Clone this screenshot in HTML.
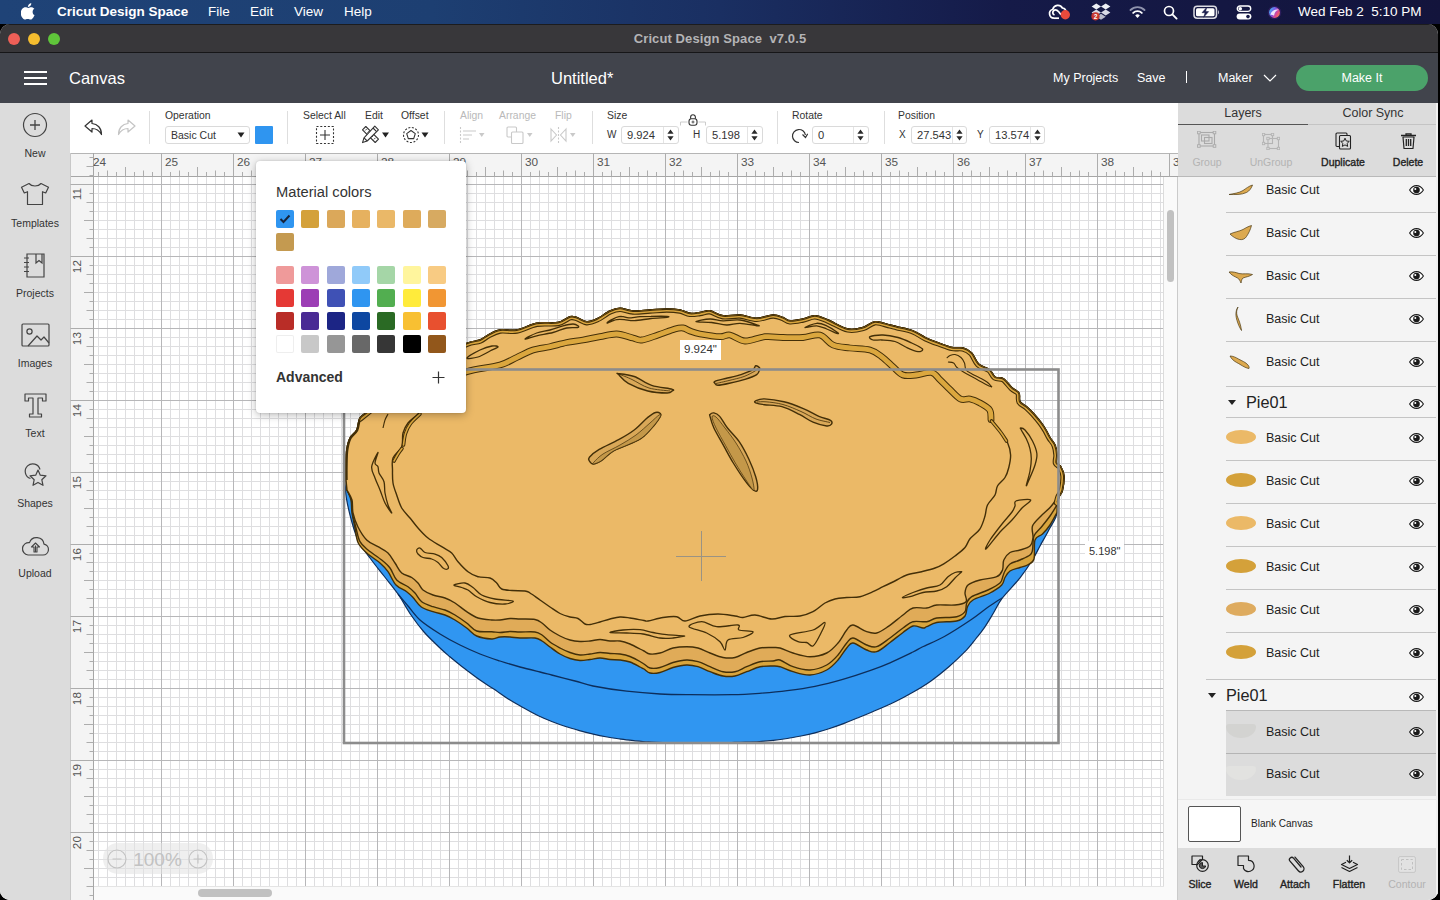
<!DOCTYPE html><html><head><meta charset="utf-8"><title>Cricut Design Space</title><style>
*{box-sizing:border-box;margin:0;padding:0}
html,body{width:1440px;height:900px;overflow:hidden;background:#000}
body{font-family:"Liberation Sans",sans-serif;position:relative;color:#222}
.abs{position:absolute}
.t{position:absolute;white-space:nowrap;line-height:1}
#menubar{left:0;top:0;width:1440px;height:24px;background:linear-gradient(90deg,#1f4377 0%,#1d3f72 30%,#1a2f62 50%,#151a48 70%,#13143c 100%)}
#menubar .t{color:#fff;font-size:13.5px;top:5px}
#win{left:0;top:24px;width:1438px;height:876px;background:#f4f4f4;border-radius:10px 10px 10px 10px;overflow:hidden}
#titlebar{left:0;top:0;width:1440px;height:29px;background:#38373a;border-top:1px solid #1c1c1e;border-bottom:1px solid #161618}
#header{left:0;top:29px;width:1440px;height:50px;background:#41444c}
#header .t{color:#fff}
#sidebar{left:0;top:79px;width:70px;height:797px;background:#dcdcdc}
#sidebar .t{font-size:10.5px;color:#333;width:70px;text-align:center;left:0}
#toolbar{left:70px;top:79px;width:1108px;height:50px;background:#fff}
#toolbar .lbl{font-size:10.4px;color:#333;top:8px}
#toolbar .dis{color:#b9b9b9}
.div{position:absolute;width:1px;top:8px;height:33px;background:#dedede}
.inp{position:absolute;top:23px;height:18px;border:1px solid #dadada;border-radius:3px;background:#fff;font-size:11.2px;color:#333;line-height:16px;padding-left:5px}
.sm{font-size:10px;color:#333;top:27px}
.spin{position:absolute;top:2px;width:7px;height:12px}
#canvas{left:70px;top:129px;width:1108px;height:747px;background:#fafafa;overflow:hidden}
#panel{left:1178px;top:79px;width:262px;height:797px;background:#f4f4f4;box-shadow:inset -3px 0 0 #fdfdfd}
</style></head><body><div id="menubar" class="abs"><svg class="abs" style="left:21px;top:3px" width="15" height="17" viewBox="0 0 15 17"><path d="M10.3 0.2c.1 1-.3 1.9-.9 2.6-.6.7-1.6 1.200-2.500 1.100-.1-1 .4-1.900.9-2.500.6-.7 1.700-1.200 2.500-1.200zM13.600 12.100c-.4.900-.6 1.300-1.100 2.100-.7 1.100-1.700 2.400-2.900 2.400-1.100 0-1.400-.7-2.900-.7s-1.800.7-2.900.7c-1.200 0-2.100-1.200-2.800-2.300C-.9 11.400-.4 7.700 1.100 5.900c.9-1.100 2.100-1.700 3.300-1.700 1.200 0 2 .7 3 .7s1.600-.7 3-.7c1 0 2.200.6 3 1.600-2.600 1.500-2.200 5.200.2 6.300z" fill="#fff"/></svg><span class="t" style="left:57px;font-weight:bold">Cricut Design Space</span><span class="t" style="left:208px">File</span><span class="t" style="left:250px">Edit</span><span class="t" style="left:294px">View</span><span class="t" style="left:344px">Help</span><span class="t" style="left:1298px">Wed Feb 2&nbsp; 5:10 PM</span>
<svg class="abs" style="left:1048px;top:3px" width="24" height="20" viewBox="0 0 24 20"><g fill="none" stroke="#fff" stroke-width="1.700"><path d="M6 15.200a4.600 4.600 0 0 1-1.200-9 5.200 5.200 0 0 1 9.600-1.200 4.300 4.300 0 0 1 3.600 3"/><path d="M6.500 12a2.700 2.700 0 0 1 1-5.200c1.300 0 2.200.8 3.200 2l2.300 2.900"/><path d="M6 15.200h5"/></g><circle cx="17.300" cy="11.800" r="4.700" fill="#ea4a3c"/></svg>
<svg class="abs" style="left:1089px;top:2px" width="24" height="21" viewBox="0 0 24 21"><g fill="#d9dbe6"><path d="M7.300 1.500l4.700 3-4.700 3-4.700-3zM16.700 1.500l4.700 3-4.700 3-4.700-3z" fill="#eef0f6"/><path d="M2.600 10.500l4.700-3 4.700 3-4.700 3zM16.700 7.500l4.700 3-4.700 3-4.700-3z"/><path d="M7.300 14.800l4.700-3 4.700 3-4.700 3z" fill="#b9bccb"/></g><circle cx="6.500" cy="14.300" r="4.100" fill="#c8372d"/><text x="6.500" y="16.700" font-size="6.600" fill="#fff" text-anchor="middle" font-family="Liberation Sans" font-weight="bold">2</text></svg>
<svg class="abs" style="left:1129px;top:5px" width="17" height="14" viewBox="0 0 17 14"><g fill="none" stroke-linecap="round"><path d="M1.500 5a10 10 0 0 1 14 0" stroke="#8f93ad" stroke-width="1.900"/><path d="M4.200 7.900a6.200 6.200 0 0 1 8.600 0" stroke="#fff" stroke-width="1.900"/></g><path d="M8.500 13l-2.300-2.600a3.200 3.200 0 0 1 4.600 0z" fill="#fff"/></svg>
<svg class="abs" style="left:1163px;top:5px" width="15" height="15" viewBox="0 0 15 15"><circle cx="6" cy="6" r="4.500" fill="none" stroke="#fff" stroke-width="1.700"/><path d="M9.400 9.400l4.200 4.200" stroke="#fff" stroke-width="1.900" stroke-linecap="round"/></svg>
<svg class="abs" style="left:1193px;top:5px" width="28" height="15" viewBox="0 0 28 15"><rect x="1" y="1.300" width="22.500" height="12" rx="3.200" fill="none" stroke="#fff" stroke-opacity=".85" stroke-width="1.500"/><rect x="3" y="3.300" width="18.500" height="8" rx="1.500" fill="#fff"/><path d="M25 5.300v4c1.300-.4 1.300-3.600 0-4z" fill="#fff" fill-opacity=".7"/><path d="M13.800 2.200l-4.800 5.500h3l-1.300 4.600 5-5.700h-3.100z" fill="#1a1c4c" stroke="#1a1c4c" stroke-width=".5"/></svg>
<svg class="abs" style="left:1236px;top:5px" width="16" height="15" viewBox="0 0 16 15"><rect x="1.300" y="1" width="13.400" height="5.400" rx="2.700" fill="none" stroke="#fff" stroke-width="1.400"/><circle cx="4.300" cy="3.700" r="1.800" fill="#fff"/><rect x="0.600" y="8.600" width="14.800" height="6" rx="3" fill="#fff"/><circle cx="12" cy="11.600" r="1.800" fill="#171a48"/></svg>
<svg class="abs" style="left:1267px;top:5px" width="15" height="15" viewBox="0 0 16 16"><defs><linearGradient id="siri" x1="0" y1=".2" x2="1" y2=".8"><stop offset="0" stop-color="#3fc4f4"/><stop offset=".4" stop-color="#7a55e8"/><stop offset=".7" stop-color="#e0468f"/><stop offset="1" stop-color="#f58a3c"/></linearGradient></defs><circle cx="8" cy="8" r="7.300" fill="#2b1d5a"/><circle cx="8" cy="8" r="5.800" fill="url(#siri)"/><path d="M3.500 10.500c1.500-4.500 5-6 9-5.500-3 .8-4.500 3-5 6.500-1-.8-2.500-1.200-4-1z" fill="#fff" fill-opacity=".85"/></svg>
</div><div id="win" class="abs"><div id="titlebar" class="abs"><div class="abs" style="left:8px;top:8px;width:12px;height:12px;border-radius:6px;background:#ee5f57"></div><div class="abs" style="left:28px;top:8px;width:12px;height:12px;border-radius:6px;background:#f5bd2f"></div><div class="abs" style="left:48px;top:8px;width:12px;height:12px;border-radius:6px;background:#5fc53a"></div><span class="t" style="left:0;width:1440px;text-align:center;top:7px;font-size:13px;font-weight:bold;color:#b4b4b6;letter-spacing:.1px">Cricut Design Space&nbsp; v7.0.5</span></div><div id="header" class="abs"><div class="abs" style="left:24px;top:18px;width:23px;height:2px;background:#fff"></div><div class="abs" style="left:24px;top:24px;width:23px;height:2px;background:#fff"></div><div class="abs" style="left:24px;top:30px;width:23px;height:2px;background:#fff"></div><span class="t" style="left:69px;top:17px;font-size:16.500px">Canvas</span><span class="t" style="left:551px;top:17px;font-size:16.500px">Untitled*</span><span class="t" style="left:1053px;top:19px;font-size:12.500px">My Projects</span><span class="t" style="left:1137px;top:19px;font-size:12.500px">Save</span><div class="abs" style="left:1186px;top:18px;width:1px;height:12px;background:#fff"></div><span class="t" style="left:1218px;top:19px;font-size:12.500px">Maker</span><svg class="abs" style="left:1263px;top:21px" width="14" height="8" viewBox="0 0 14 8"><path d="M1 1l6 6 6-6" fill="none" stroke="#fff" stroke-width="1.200"/></svg><div class="abs" style="left:1296px;top:12px;width:132px;height:26px;border-radius:13px;background:#4ba26a"></div><span class="t" style="left:1296px;width:132px;text-align:center;top:19px;font-size:12.500px">Make It</span></div></div><div class="abs" style="left:0;top:103px;width:1438px;height:797px;overflow:hidden;border-radius:0 0 10px 10px"><div class="abs" style="left:0;top:-103px;width:1440px;height:900px"><div class="abs" style="left:0;top:103px;width:1440px;height:797px;background:#fafafa"></div><div class="abs" style="left:0;top:24px;width:1440px;height:0"><div class="abs" style="left:0;top:0"></div></div><div id="canvas" class="abs"></div><svg class="abs" style="left:0;top:0" width="1440" height="900" viewBox="0 0 1440 900"><defs><clipPath id="gridclip"><rect x="93" y="177" width="1071" height="709"/></clipPath></defs><rect x="93" y="177" width="1071" height="709" fill="#fff"/><path d="M98.5 177V886M107.5 177V886M116.5 177V886M125.5 177V886M134.5 177V886M143.5 177V886M152.5 177V886M170.5 177V886M179.5 177V886M188.5 177V886M197.5 177V886M206.5 177V886M215.5 177V886M224.5 177V886M242.5 177V886M251.5 177V886M260.5 177V886M269.5 177V886M278.5 177V886M287.5 177V886M296.5 177V886M314.5 177V886M323.5 177V886M332.5 177V886M341.5 177V886M350.5 177V886M359.5 177V886M368.5 177V886M386.5 177V886M395.5 177V886M404.5 177V886M413.5 177V886M422.5 177V886M431.5 177V886M440.5 177V886M458.5 177V886M467.5 177V886M476.5 177V886M485.5 177V886M494.5 177V886M503.5 177V886M512.5 177V886M530.5 177V886M539.5 177V886M548.5 177V886M557.5 177V886M566.5 177V886M575.5 177V886M584.5 177V886M602.5 177V886M611.5 177V886M620.5 177V886M629.5 177V886M638.5 177V886M647.5 177V886M656.5 177V886M674.5 177V886M683.5 177V886M692.5 177V886M701.5 177V886M710.5 177V886M719.5 177V886M728.5 177V886M746.5 177V886M755.5 177V886M764.5 177V886M773.5 177V886M782.5 177V886M791.5 177V886M800.5 177V886M818.5 177V886M827.5 177V886M836.5 177V886M845.5 177V886M854.5 177V886M863.5 177V886M872.5 177V886M890.5 177V886M899.5 177V886M908.5 177V886M917.5 177V886M926.5 177V886M935.5 177V886M944.5 177V886M962.5 177V886M971.5 177V886M980.5 177V886M989.5 177V886M998.5 177V886M1007.5 177V886M1016.5 177V886M1034.5 177V886M1043.5 177V886M1052.5 177V886M1061.5 177V886M1070.5 177V886M1079.5 177V886M1088.5 177V886M1106.5 177V886M1115.5 177V886M1124.5 177V886M1133.5 177V886M1142.5 177V886M1151.5 177V886M1160.5 177V886M93 193.5H1164M93 202.5H1164M93 211.5H1164M93 220.5H1164M93 229.5H1164M93 238.5H1164M93 247.5H1164M93 265.5H1164M93 274.5H1164M93 283.5H1164M93 292.5H1164M93 301.5H1164M93 310.5H1164M93 319.5H1164M93 337.5H1164M93 346.5H1164M93 355.5H1164M93 364.5H1164M93 373.5H1164M93 382.5H1164M93 391.5H1164M93 409.5H1164M93 418.5H1164M93 427.5H1164M93 436.5H1164M93 445.5H1164M93 454.5H1164M93 463.5H1164M93 481.5H1164M93 490.5H1164M93 499.5H1164M93 508.5H1164M93 517.5H1164M93 526.5H1164M93 535.5H1164M93 553.5H1164M93 562.5H1164M93 571.5H1164M93 580.5H1164M93 589.5H1164M93 598.5H1164M93 607.5H1164M93 625.5H1164M93 634.5H1164M93 643.5H1164M93 652.5H1164M93 661.5H1164M93 670.5H1164M93 679.5H1164M93 697.5H1164M93 706.5H1164M93 715.5H1164M93 724.5H1164M93 733.5H1164M93 742.5H1164M93 751.5H1164M93 769.5H1164M93 778.5H1164M93 787.5H1164M93 796.5H1164M93 805.5H1164M93 814.5H1164M93 823.5H1164M93 841.5H1164M93 850.5H1164M93 859.5H1164M93 868.5H1164M93 877.5H1164" stroke="#dedee0" stroke-width="1" fill="none"/><path d="M161.5 177V886M233.5 177V886M305.5 177V886M377.5 177V886M449.5 177V886M521.5 177V886M593.5 177V886M665.5 177V886M737.5 177V886M809.5 177V886M881.5 177V886M953.5 177V886M1025.5 177V886M1097.5 177V886M93 184.5H1164M93 256.5H1164M93 328.5H1164M93 400.5H1164M93 472.5H1164M93 544.5H1164M93 616.5H1164M93 688.5H1164M93 760.5H1164M93 832.5H1164" stroke="#b7b7b9" stroke-width="1" fill="none"/><rect x="70" y="153" width="1108" height="24" fill="#f4f4f4"/><rect x="70" y="153" width="23" height="747" fill="#f4f4f4"/><path d="M70 153.500H1178" stroke="#b5b5b5" stroke-width="1"/><path d="M70 176.500H1178" stroke="#a6a6a6" stroke-width="1"/><path d="M93.500 153V900" stroke="#a6a6a6" stroke-width="1"/><path d="M70.500 153V900" stroke="#c8c8c8" stroke-width="1"/><path d="M98.5 176.500v-4.5M107.5 176.500v-6M116.5 176.500v-4.5M125.5 176.500v-9.5M134.5 176.500v-4.5M143.5 176.500v-6M152.5 176.500v-4.5M161.5 176.500v-23M170.5 176.500v-4.5M179.5 176.500v-6M188.5 176.500v-4.5M197.5 176.500v-9.5M206.5 176.500v-4.5M215.5 176.500v-6M224.5 176.500v-4.5M233.5 176.500v-23M242.5 176.500v-4.5M251.5 176.500v-6M260.5 176.500v-4.5M269.5 176.500v-9.5M278.5 176.500v-4.5M287.5 176.500v-6M296.5 176.500v-4.5M305.5 176.500v-23M314.5 176.500v-4.5M323.5 176.500v-6M332.5 176.500v-4.5M341.5 176.500v-9.5M350.5 176.500v-4.5M359.5 176.500v-6M368.5 176.500v-4.5M377.5 176.500v-23M386.5 176.500v-4.5M395.5 176.500v-6M404.5 176.500v-4.5M413.5 176.500v-9.5M422.5 176.500v-4.5M431.5 176.500v-6M440.5 176.500v-4.5M449.5 176.500v-23M458.5 176.500v-4.5M467.5 176.500v-6M476.5 176.500v-4.5M485.5 176.500v-9.5M494.5 176.500v-4.5M503.5 176.500v-6M512.5 176.500v-4.5M521.5 176.500v-23M530.5 176.500v-4.5M539.5 176.500v-6M548.5 176.500v-4.5M557.5 176.500v-9.5M566.5 176.500v-4.5M575.5 176.500v-6M584.5 176.500v-4.5M593.5 176.500v-23M602.5 176.500v-4.5M611.5 176.500v-6M620.5 176.500v-4.5M629.5 176.500v-9.5M638.5 176.500v-4.5M647.5 176.500v-6M656.5 176.500v-4.5M665.5 176.500v-23M674.5 176.500v-4.5M683.5 176.500v-6M692.5 176.500v-4.5M701.5 176.500v-9.5M710.5 176.500v-4.5M719.5 176.500v-6M728.5 176.500v-4.5M737.5 176.500v-23M746.5 176.500v-4.5M755.5 176.500v-6M764.5 176.500v-4.5M773.5 176.500v-9.5M782.5 176.500v-4.5M791.5 176.500v-6M800.5 176.500v-4.5M809.5 176.500v-23M818.5 176.500v-4.5M827.5 176.500v-6M836.5 176.500v-4.5M845.5 176.500v-9.5M854.5 176.500v-4.5M863.5 176.500v-6M872.5 176.500v-4.5M881.5 176.500v-23M890.5 176.500v-4.5M899.5 176.500v-6M908.5 176.500v-4.5M917.5 176.500v-9.5M926.5 176.500v-4.5M935.5 176.500v-6M944.5 176.500v-4.5M953.5 176.500v-23M962.5 176.500v-4.5M971.5 176.500v-6M980.5 176.500v-4.5M989.5 176.500v-9.5M998.5 176.500v-4.5M1007.5 176.500v-6M1016.5 176.500v-4.5M1025.5 176.500v-23M1034.5 176.500v-4.5M1043.5 176.500v-6M1052.5 176.500v-4.5M1061.5 176.500v-9.5M1070.5 176.500v-4.5M1079.5 176.500v-6M1088.5 176.500v-4.5M1097.5 176.500v-23M1106.5 176.500v-4.5M1115.5 176.500v-6M1124.5 176.500v-4.5M1133.5 176.500v-9.5M1142.5 176.500v-4.5M1151.5 176.500v-6M1160.5 176.500v-4.5M1169.5 176.500v-23M93.500 157.5h-4M93.500 166.5h-7M93.500 175.5h-4M93.500 184.5h-23M93.500 193.5h-4M93.500 202.5h-7M93.500 211.5h-4M93.500 220.5h-9.5M93.500 229.5h-4M93.500 238.5h-7M93.500 247.5h-4M93.500 256.5h-23M93.500 265.5h-4M93.500 274.5h-7M93.500 283.5h-4M93.500 292.5h-9.5M93.500 301.5h-4M93.500 310.5h-7M93.500 319.5h-4M93.500 328.5h-23M93.500 337.5h-4M93.500 346.5h-7M93.500 355.5h-4M93.500 364.5h-9.5M93.500 373.5h-4M93.500 382.5h-7M93.500 391.5h-4M93.500 400.5h-23M93.500 409.5h-4M93.500 418.5h-7M93.500 427.5h-4M93.500 436.5h-9.5M93.500 445.5h-4M93.500 454.5h-7M93.500 463.5h-4M93.500 472.5h-23M93.500 481.5h-4M93.500 490.5h-7M93.500 499.5h-4M93.500 508.5h-9.5M93.500 517.5h-4M93.500 526.5h-7M93.500 535.5h-4M93.500 544.5h-23M93.500 553.5h-4M93.500 562.5h-7M93.500 571.5h-4M93.500 580.5h-9.5M93.500 589.5h-4M93.500 598.5h-7M93.500 607.5h-4M93.500 616.5h-23M93.500 625.5h-4M93.500 634.5h-7M93.500 643.5h-4M93.500 652.5h-9.5M93.500 661.5h-4M93.500 670.5h-7M93.500 679.5h-4M93.500 688.5h-23M93.500 697.5h-4M93.500 706.5h-7M93.500 715.5h-4M93.500 724.5h-9.5M93.500 733.5h-4M93.500 742.5h-7M93.500 751.5h-4M93.500 760.5h-23M93.500 769.5h-4M93.500 778.5h-7M93.500 787.5h-4M93.500 796.5h-9.5M93.500 805.5h-4M93.500 814.5h-7M93.500 823.5h-4M93.500 832.5h-23M93.500 841.5h-4M93.500 850.5h-7M93.500 859.5h-4M93.500 868.5h-9.5M93.500 877.5h-4M93.500 886.5h-7M93.500 895.5h-4" stroke="#adadad" stroke-width="1" fill="none"/><text x="93" y="166" font-size="11.800" fill="#555" font-family="Liberation Sans">24</text><text x="165" y="166" font-size="11.800" fill="#555" font-family="Liberation Sans">25</text><text x="237" y="166" font-size="11.800" fill="#555" font-family="Liberation Sans">26</text><text x="309" y="166" font-size="11.800" fill="#555" font-family="Liberation Sans">27</text><text x="381" y="166" font-size="11.800" fill="#555" font-family="Liberation Sans">28</text><text x="453" y="166" font-size="11.800" fill="#555" font-family="Liberation Sans">29</text><text x="525" y="166" font-size="11.800" fill="#555" font-family="Liberation Sans">30</text><text x="597" y="166" font-size="11.800" fill="#555" font-family="Liberation Sans">31</text><text x="669" y="166" font-size="11.800" fill="#555" font-family="Liberation Sans">32</text><text x="741" y="166" font-size="11.800" fill="#555" font-family="Liberation Sans">33</text><text x="813" y="166" font-size="11.800" fill="#555" font-family="Liberation Sans">34</text><text x="885" y="166" font-size="11.800" fill="#555" font-family="Liberation Sans">35</text><text x="957" y="166" font-size="11.800" fill="#555" font-family="Liberation Sans">36</text><text x="1029" y="166" font-size="11.800" fill="#555" font-family="Liberation Sans">37</text><text x="1101" y="166" font-size="11.800" fill="#555" font-family="Liberation Sans">38</text><text x="1173" y="166" font-size="11.800" fill="#555" font-family="Liberation Sans">39</text><text transform="translate(81,188) rotate(-90)" font-size="11.800" fill="#555" font-family="Liberation Sans" text-anchor="end">11</text><text transform="translate(81,260) rotate(-90)" font-size="11.800" fill="#555" font-family="Liberation Sans" text-anchor="end">12</text><text transform="translate(81,332) rotate(-90)" font-size="11.800" fill="#555" font-family="Liberation Sans" text-anchor="end">13</text><text transform="translate(81,404) rotate(-90)" font-size="11.800" fill="#555" font-family="Liberation Sans" text-anchor="end">14</text><text transform="translate(81,476) rotate(-90)" font-size="11.800" fill="#555" font-family="Liberation Sans" text-anchor="end">15</text><text transform="translate(81,548) rotate(-90)" font-size="11.800" fill="#555" font-family="Liberation Sans" text-anchor="end">16</text><text transform="translate(81,620) rotate(-90)" font-size="11.800" fill="#555" font-family="Liberation Sans" text-anchor="end">17</text><text transform="translate(81,692) rotate(-90)" font-size="11.800" fill="#555" font-family="Liberation Sans" text-anchor="end">18</text><text transform="translate(81,764) rotate(-90)" font-size="11.800" fill="#555" font-family="Liberation Sans" text-anchor="end">19</text><text transform="translate(81,836) rotate(-90)" font-size="11.800" fill="#555" font-family="Liberation Sans" text-anchor="end">20</text><rect x="1164" y="177" width="14" height="723" fill="#fafafa"/><path d="M1163.500 177V900" stroke="#dcdcdc"/><rect x="94" y="886" width="1070" height="14" fill="#fafafa"/><path d="M94 886.500H1164" stroke="#e4e4e4"/><rect x="1167" y="210" width="7" height="72" rx="3.500" fill="#c1c1c1"/><rect x="198" y="889" width="74" height="8" rx="4" fill="#c1c1c1"/><g clip-path="url(#gridclip)"><path d="M360.0 470.0C358.2 471.3 351.4 474.7 349.0 478.0C346.6 481.3 345.3 483.8 345.5 490.0C345.7 496.2 347.9 506.7 350.0 515.0C352.1 523.3 354.7 532.8 358.0 540.0C361.3 547.2 365.7 552.0 370.0 558.0C374.3 564.0 379.3 570.0 384.0 576.0C388.7 582.0 393.5 587.5 398.0 594.0C402.5 600.5 406.7 608.7 411.0 615.0C415.3 621.3 419.2 626.5 424.0 632.0C428.8 637.5 435.8 643.9 440.0 648.0C444.2 652.1 446.2 653.7 449.5 656.5C452.8 659.3 454.9 661.1 460.0 665.0C465.1 668.9 474.5 676.1 480.0 680.0C485.5 683.9 488.0 685.2 493.0 688.5C498.0 691.8 504.9 696.8 510.0 700.0C515.1 703.2 519.3 705.4 523.9 708.0C528.5 710.6 533.2 713.2 537.8 715.5C542.4 717.8 547.1 719.7 551.7 721.5C556.3 723.3 561.0 725.0 565.6 726.5C570.2 728.0 574.8 729.3 579.4 730.6C584.0 731.9 588.7 733.1 593.3 734.2C597.9 735.3 602.6 736.2 607.2 737.0C611.8 737.8 616.5 738.6 621.1 739.2C625.7 739.8 630.4 740.3 635.0 740.8C639.6 741.2 644.3 741.6 648.9 741.9C653.5 742.2 654.3 742.4 662.8 742.5C671.3 742.6 688.5 742.7 700.0 742.7C711.5 742.7 724.1 742.6 731.7 742.5C739.3 742.4 741.0 742.4 745.6 742.2C750.2 742.0 754.8 741.8 759.4 741.5C764.0 741.2 768.7 740.8 773.3 740.3C777.9 739.8 782.6 739.2 787.2 738.5C791.8 737.8 796.4 736.9 801.0 736.0C805.6 735.1 810.4 734.1 815.0 732.9C819.6 731.7 824.3 730.3 828.9 728.8C833.5 727.3 838.2 725.6 842.8 723.9C847.4 722.1 850.9 720.7 856.7 718.3C862.5 715.9 871.3 712.3 877.8 709.5C884.3 706.7 889.7 704.4 895.6 701.5C901.5 698.6 907.4 695.4 913.3 692.0C919.2 688.6 925.1 685.1 931.0 680.9C936.9 676.7 942.9 671.9 948.9 666.7C954.9 661.5 962.2 654.4 966.7 649.8C971.2 645.2 972.7 642.7 975.6 639.0C978.5 635.3 981.5 631.9 984.4 627.6C987.3 623.3 990.3 618.2 993.3 613.3C996.3 608.4 997.8 604.1 1002.2 598.2C1006.7 592.3 1015.0 584.2 1020.0 577.8C1025.0 571.4 1029.1 565.3 1032.4 560.0C1035.7 554.7 1037.3 551.0 1040.0 546.0C1042.7 541.0 1046.0 535.6 1048.8 530.0C1051.6 524.4 1056.5 519.2 1057.0 512.5C1057.5 505.8 1054.8 497.1 1052.0 490.0C1049.2 482.9 1042.0 473.3 1040.0 470.0Z" fill="#3096f1" stroke="#0d2e5c" stroke-width="1.2"/>
<path d="M398.0 594.0C399.7 596.0 404.3 601.7 408.0 606.0C411.7 610.3 414.7 615.3 420.0 620.0C425.3 624.7 433.3 629.8 440.0 634.0C446.7 638.2 453.3 641.7 460.0 645.0C466.7 648.3 473.3 651.3 480.0 654.0C486.7 656.7 493.3 658.8 500.0 661.0C506.7 663.2 513.3 665.2 520.0 667.0C526.7 668.8 534.7 670.7 540.0 672.0C545.3 673.3 545.9 673.5 551.7 675.0C557.5 676.5 568.1 679.2 575.0 681.0C581.9 682.8 584.4 684.3 593.0 686.0C601.6 687.7 615.5 689.9 626.7 691.2C637.9 692.5 649.5 693.4 660.0 694.0C670.5 694.6 678.0 694.6 690.0 694.7C702.0 694.8 720.1 694.9 731.7 694.7C743.3 694.5 750.1 694.0 759.4 693.3C768.6 692.6 777.9 691.8 787.2 690.6C796.5 689.5 805.7 688.3 815.0 686.4C824.3 684.5 833.5 682.1 842.8 679.4C852.1 676.7 862.7 673.2 870.6 670.4C878.5 667.6 882.9 665.9 890.0 662.8C897.1 659.7 907.6 654.6 913.0 652.0C918.4 649.4 917.0 649.6 922.2 647.0C927.4 644.4 936.3 641.0 944.4 636.5C952.5 632.0 963.6 624.8 971.0 619.8C978.4 614.8 983.7 610.1 988.9 606.5C994.1 602.9 999.8 599.4 1002.0 598.0" fill="none" stroke="#0d2e5c" stroke-width="1.3"/>
<clipPath id="cS3"><path d="M346.0 480.0C346.0 477.7 345.9 471.0 346.0 466.0C346.1 461.0 346.0 454.7 346.7 450.0C347.4 445.3 348.3 441.3 350.0 438.0C351.7 434.7 355.0 433.3 356.7 430.0C358.4 426.7 357.8 421.3 360.0 418.0C362.2 414.7 366.0 413.3 370.0 410.0C374.0 406.7 379.0 402.2 384.0 398.0C389.0 393.8 394.0 389.7 400.0 385.0C406.0 380.3 412.5 375.0 420.0 370.0C427.5 365.0 437.2 359.4 445.0 355.0C452.8 350.6 460.9 345.8 466.7 343.3C472.5 340.8 476.4 341.4 480.0 340.0C483.6 338.6 484.7 336.7 488.0 335.0C491.3 333.3 495.2 330.8 500.0 330.0C504.8 329.2 510.6 331.1 516.7 330.0C522.8 328.9 529.8 324.6 536.7 323.3C543.6 322.1 552.5 323.6 558.0 322.5C563.5 321.4 566.9 317.5 570.0 316.7C573.1 315.9 573.9 316.7 576.7 317.5C579.5 318.3 583.4 321.4 586.7 321.7C590.0 321.9 592.8 320.8 596.7 319.0C600.6 317.2 606.1 312.8 610.0 311.0C613.9 309.2 616.2 308.3 620.0 308.3C623.8 308.3 628.0 310.7 633.0 311.0C638.0 311.3 644.4 310.3 650.0 310.0C655.6 309.7 661.7 309.0 666.7 309.0C671.7 309.0 676.1 309.3 680.0 310.0C683.9 310.7 686.7 312.9 690.0 313.3C693.3 313.7 696.7 312.9 700.0 312.5C703.3 312.1 706.2 310.2 710.0 310.8C713.8 311.4 718.0 315.1 723.0 315.8C728.0 316.5 734.4 314.6 740.0 315.0C745.6 315.4 751.2 318.3 756.7 318.3C762.2 318.3 768.6 315.1 773.0 315.0C777.4 314.9 780.2 316.5 783.0 317.5C785.8 318.5 786.7 320.6 790.0 320.8C793.3 321.1 798.8 319.8 803.0 319.0C807.2 318.2 810.8 315.6 815.0 315.8C819.2 316.0 822.5 317.8 828.0 320.0C833.5 322.2 842.2 327.8 848.0 329.0C853.8 330.2 858.5 328.7 863.0 327.5C867.5 326.3 870.5 322.1 875.0 321.7C879.5 321.3 886.4 324.2 890.0 325.0C893.6 325.8 892.9 325.7 896.7 326.7C900.5 327.7 908.1 328.9 913.0 330.8C917.9 332.7 921.3 335.7 925.8 337.8C930.2 339.9 935.3 341.7 939.7 343.3C944.1 344.9 948.1 346.7 952.0 347.5C955.9 348.3 959.7 347.1 963.0 348.0C966.3 348.9 969.1 350.3 971.7 353.0C974.3 355.7 975.6 361.2 978.6 364.0C981.6 366.8 987.0 367.5 989.7 369.7C992.4 371.9 992.7 375.5 995.0 377.0C997.3 378.5 1000.8 377.0 1003.6 378.8C1006.4 380.6 1009.4 385.4 1012.0 387.8C1014.6 390.2 1017.7 390.7 1019.0 393.0C1020.3 395.3 1018.7 399.4 1020.0 401.7C1021.3 404.0 1024.7 404.9 1027.0 407.0C1029.3 409.1 1031.7 411.4 1034.0 414.0C1036.3 416.6 1039.0 419.8 1041.0 422.5C1043.0 425.2 1044.5 427.5 1046.0 430.0C1047.5 432.5 1048.5 435.0 1050.0 437.5C1051.5 440.0 1053.8 442.1 1055.0 445.0C1056.2 447.9 1056.8 452.0 1057.0 455.0C1057.2 458.0 1055.8 461.0 1056.5 463.0C1057.2 465.0 1059.8 464.8 1061.0 467.0C1062.2 469.2 1063.8 472.2 1064.0 476.0C1064.2 479.8 1063.3 486.5 1062.5 490.0C1061.7 493.5 1059.8 494.9 1059.0 497.0C1058.2 499.1 1057.8 501.6 1057.5 502.5L1057.0 512.5C1055.8 514.6 1052.4 521.4 1050.0 525.0C1047.6 528.6 1045.0 531.5 1042.5 534.0C1040.0 536.5 1036.4 535.8 1035.0 540.0C1033.6 544.2 1035.2 554.8 1034.0 559.0C1032.8 563.2 1029.8 563.6 1027.5 565.0C1025.2 566.4 1022.9 566.5 1020.0 567.5C1017.1 568.5 1012.5 569.3 1010.0 571.0C1007.5 572.7 1006.4 575.2 1005.0 577.5C1003.6 579.8 1004.2 582.4 1001.7 585.0C999.2 587.6 994.8 590.5 990.0 593.0C985.2 595.5 976.8 597.7 973.0 600.0C969.2 602.3 968.8 604.0 967.5 606.7C966.2 609.4 966.8 613.6 965.0 616.0C963.2 618.4 961.4 619.9 956.7 621.0C952.0 622.1 941.7 621.5 936.7 622.5C931.7 623.5 929.0 625.8 926.7 626.7C924.4 627.6 925.3 628.1 923.0 628.0C920.7 627.9 916.3 625.2 913.0 626.0C909.7 626.8 906.8 629.8 903.0 632.5C899.2 635.2 894.4 639.3 890.0 642.5C885.6 645.7 880.6 650.5 876.7 651.7C872.8 653.0 870.7 651.5 866.7 650.0C862.8 648.5 856.3 643.3 853.0 643.0C849.7 642.7 849.2 645.2 846.7 648.0C844.2 650.8 841.3 656.3 838.0 660.0C834.7 663.7 831.4 667.5 826.7 670.0C822.0 672.5 815.6 674.7 810.0 675.0C804.4 675.3 798.0 673.1 793.0 671.7C788.0 670.3 783.3 667.7 780.0 666.7C776.7 665.8 776.3 666.0 773.0 666.0C769.7 666.0 764.4 665.8 760.0 666.7C755.6 667.7 750.9 670.2 746.7 671.7C742.5 673.2 739.0 675.3 735.0 676.0C731.0 676.7 727.2 676.7 723.0 676.0C718.8 675.3 714.2 673.2 710.0 671.7C705.8 670.2 701.9 667.8 698.0 666.7C694.1 665.6 690.9 664.9 686.7 665.0C682.5 665.1 677.5 666.2 673.0 667.5C668.5 668.8 663.8 671.6 660.0 672.5C656.2 673.4 652.7 673.6 650.0 673.0C647.3 672.4 645.7 670.0 644.0 669.0C642.3 668.0 642.3 668.2 640.0 667.0C637.7 665.8 633.3 663.2 630.0 662.0C626.7 660.8 623.3 660.4 620.0 660.0C616.7 659.6 613.3 659.8 610.0 659.5C606.7 659.2 603.3 658.0 600.0 658.0C596.7 658.0 593.3 659.1 590.0 659.5C586.7 659.9 583.3 660.7 580.0 660.5C576.7 660.3 573.3 659.6 570.0 658.5C566.7 657.4 563.3 655.9 560.0 654.0C556.7 652.1 553.0 649.2 550.0 647.0C547.0 644.8 544.5 642.5 542.0 641.0C539.5 639.5 538.7 638.5 535.0 638.0C531.3 637.5 524.2 638.2 520.0 638.0C515.8 637.8 513.3 637.2 510.0 637.0C506.7 636.8 503.1 636.7 500.0 637.0C496.9 637.3 495.6 639.2 491.7 639.0C487.8 638.8 480.9 637.8 476.7 636.0C472.5 634.2 470.3 630.7 466.7 628.0C463.1 625.3 458.6 622.2 455.0 620.0C451.4 617.8 448.7 616.4 445.0 615.0C441.3 613.6 437.0 613.1 433.0 611.7C429.0 610.3 424.3 609.1 421.0 606.7C417.7 604.3 415.4 600.0 413.0 597.5C410.6 595.0 409.5 593.8 406.7 591.7C403.9 589.6 399.1 588.3 396.0 585.0C392.9 581.7 390.7 575.4 388.0 571.7C385.3 568.0 383.6 566.1 380.0 563.0C376.4 559.9 370.4 556.4 366.7 553.0C363.0 549.6 359.9 546.7 358.0 542.5C356.1 538.3 356.0 532.9 355.0 528.0C354.0 523.1 352.7 517.7 352.0 513.0C351.3 508.3 351.8 503.8 351.0 500.0C350.2 496.2 347.7 491.7 347.0 490.0Z"/></clipPath>
<path d="M346.0 480.0C346.0 477.7 345.9 471.0 346.0 466.0C346.1 461.0 346.0 454.7 346.7 450.0C347.4 445.3 348.3 441.3 350.0 438.0C351.7 434.7 355.0 433.3 356.7 430.0C358.4 426.7 357.8 421.3 360.0 418.0C362.2 414.7 366.0 413.3 370.0 410.0C374.0 406.7 379.0 402.2 384.0 398.0C389.0 393.8 394.0 389.7 400.0 385.0C406.0 380.3 412.5 375.0 420.0 370.0C427.5 365.0 437.2 359.4 445.0 355.0C452.8 350.6 460.9 345.8 466.7 343.3C472.5 340.8 476.4 341.4 480.0 340.0C483.6 338.6 484.7 336.7 488.0 335.0C491.3 333.3 495.2 330.8 500.0 330.0C504.8 329.2 510.6 331.1 516.7 330.0C522.8 328.9 529.8 324.6 536.7 323.3C543.6 322.1 552.5 323.6 558.0 322.5C563.5 321.4 566.9 317.5 570.0 316.7C573.1 315.9 573.9 316.7 576.7 317.5C579.5 318.3 583.4 321.4 586.7 321.7C590.0 321.9 592.8 320.8 596.7 319.0C600.6 317.2 606.1 312.8 610.0 311.0C613.9 309.2 616.2 308.3 620.0 308.3C623.8 308.3 628.0 310.7 633.0 311.0C638.0 311.3 644.4 310.3 650.0 310.0C655.6 309.7 661.7 309.0 666.7 309.0C671.7 309.0 676.1 309.3 680.0 310.0C683.9 310.7 686.7 312.9 690.0 313.3C693.3 313.7 696.7 312.9 700.0 312.5C703.3 312.1 706.2 310.2 710.0 310.8C713.8 311.4 718.0 315.1 723.0 315.8C728.0 316.5 734.4 314.6 740.0 315.0C745.6 315.4 751.2 318.3 756.7 318.3C762.2 318.3 768.6 315.1 773.0 315.0C777.4 314.9 780.2 316.5 783.0 317.5C785.8 318.5 786.7 320.6 790.0 320.8C793.3 321.1 798.8 319.8 803.0 319.0C807.2 318.2 810.8 315.6 815.0 315.8C819.2 316.0 822.5 317.8 828.0 320.0C833.5 322.2 842.2 327.8 848.0 329.0C853.8 330.2 858.5 328.7 863.0 327.5C867.5 326.3 870.5 322.1 875.0 321.7C879.5 321.3 886.4 324.2 890.0 325.0C893.6 325.8 892.9 325.7 896.7 326.7C900.5 327.7 908.1 328.9 913.0 330.8C917.9 332.7 921.3 335.7 925.8 337.8C930.2 339.9 935.3 341.7 939.7 343.3C944.1 344.9 948.1 346.7 952.0 347.5C955.9 348.3 959.7 347.1 963.0 348.0C966.3 348.9 969.1 350.3 971.7 353.0C974.3 355.7 975.6 361.2 978.6 364.0C981.6 366.8 987.0 367.5 989.7 369.7C992.4 371.9 992.7 375.5 995.0 377.0C997.3 378.5 1000.8 377.0 1003.6 378.8C1006.4 380.6 1009.4 385.4 1012.0 387.8C1014.6 390.2 1017.7 390.7 1019.0 393.0C1020.3 395.3 1018.7 399.4 1020.0 401.7C1021.3 404.0 1024.7 404.9 1027.0 407.0C1029.3 409.1 1031.7 411.4 1034.0 414.0C1036.3 416.6 1039.0 419.8 1041.0 422.5C1043.0 425.2 1044.5 427.5 1046.0 430.0C1047.5 432.5 1048.5 435.0 1050.0 437.5C1051.5 440.0 1053.8 442.1 1055.0 445.0C1056.2 447.9 1056.8 452.0 1057.0 455.0C1057.2 458.0 1055.8 461.0 1056.5 463.0C1057.2 465.0 1059.8 464.8 1061.0 467.0C1062.2 469.2 1063.8 472.2 1064.0 476.0C1064.2 479.8 1063.3 486.5 1062.5 490.0C1061.7 493.5 1059.8 494.9 1059.0 497.0C1058.2 499.1 1057.8 501.6 1057.5 502.5L1057.0 512.5C1055.8 514.6 1052.4 521.4 1050.0 525.0C1047.6 528.6 1045.0 531.5 1042.5 534.0C1040.0 536.5 1036.4 535.8 1035.0 540.0C1033.6 544.2 1035.2 554.8 1034.0 559.0C1032.8 563.2 1029.8 563.6 1027.5 565.0C1025.2 566.4 1022.9 566.5 1020.0 567.5C1017.1 568.5 1012.5 569.3 1010.0 571.0C1007.5 572.7 1006.4 575.2 1005.0 577.5C1003.6 579.8 1004.2 582.4 1001.7 585.0C999.2 587.6 994.8 590.5 990.0 593.0C985.2 595.5 976.8 597.7 973.0 600.0C969.2 602.3 968.8 604.0 967.5 606.7C966.2 609.4 966.8 613.6 965.0 616.0C963.2 618.4 961.4 619.9 956.7 621.0C952.0 622.1 941.7 621.5 936.7 622.5C931.7 623.5 929.0 625.8 926.7 626.7C924.4 627.6 925.3 628.1 923.0 628.0C920.7 627.9 916.3 625.2 913.0 626.0C909.7 626.8 906.8 629.8 903.0 632.5C899.2 635.2 894.4 639.3 890.0 642.5C885.6 645.7 880.6 650.5 876.7 651.7C872.8 653.0 870.7 651.5 866.7 650.0C862.8 648.5 856.3 643.3 853.0 643.0C849.7 642.7 849.2 645.2 846.7 648.0C844.2 650.8 841.3 656.3 838.0 660.0C834.7 663.7 831.4 667.5 826.7 670.0C822.0 672.5 815.6 674.7 810.0 675.0C804.4 675.3 798.0 673.1 793.0 671.7C788.0 670.3 783.3 667.7 780.0 666.7C776.7 665.8 776.3 666.0 773.0 666.0C769.7 666.0 764.4 665.8 760.0 666.7C755.6 667.7 750.9 670.2 746.7 671.7C742.5 673.2 739.0 675.3 735.0 676.0C731.0 676.7 727.2 676.7 723.0 676.0C718.8 675.3 714.2 673.2 710.0 671.7C705.8 670.2 701.9 667.8 698.0 666.7C694.1 665.6 690.9 664.9 686.7 665.0C682.5 665.1 677.5 666.2 673.0 667.5C668.5 668.8 663.8 671.6 660.0 672.5C656.2 673.4 652.7 673.6 650.0 673.0C647.3 672.4 645.7 670.0 644.0 669.0C642.3 668.0 642.3 668.2 640.0 667.0C637.7 665.8 633.3 663.2 630.0 662.0C626.7 660.8 623.3 660.4 620.0 660.0C616.7 659.6 613.3 659.8 610.0 659.5C606.7 659.2 603.3 658.0 600.0 658.0C596.7 658.0 593.3 659.1 590.0 659.5C586.7 659.9 583.3 660.7 580.0 660.5C576.7 660.3 573.3 659.6 570.0 658.5C566.7 657.4 563.3 655.9 560.0 654.0C556.7 652.1 553.0 649.2 550.0 647.0C547.0 644.8 544.5 642.5 542.0 641.0C539.5 639.5 538.7 638.5 535.0 638.0C531.3 637.5 524.2 638.2 520.0 638.0C515.8 637.8 513.3 637.2 510.0 637.0C506.7 636.8 503.1 636.7 500.0 637.0C496.9 637.3 495.6 639.2 491.7 639.0C487.8 638.8 480.9 637.8 476.7 636.0C472.5 634.2 470.3 630.7 466.7 628.0C463.1 625.3 458.6 622.2 455.0 620.0C451.4 617.8 448.7 616.4 445.0 615.0C441.3 613.6 437.0 613.1 433.0 611.7C429.0 610.3 424.3 609.1 421.0 606.7C417.7 604.3 415.4 600.0 413.0 597.5C410.6 595.0 409.5 593.8 406.7 591.7C403.9 589.6 399.1 588.3 396.0 585.0C392.9 581.7 390.7 575.4 388.0 571.7C385.3 568.0 383.6 566.1 380.0 563.0C376.4 559.9 370.4 556.4 366.7 553.0C363.0 549.6 359.9 546.7 358.0 542.5C356.1 538.3 356.0 532.9 355.0 528.0C354.0 523.1 352.7 517.7 352.0 513.0C351.3 508.3 351.8 503.8 351.0 500.0C350.2 496.2 347.7 491.7 347.0 490.0Z" fill="#d9a53d" stroke="#432f08" stroke-width="1.4" stroke-linejoin="round"/>
<path d="M346.0 480.0C346.0 477.7 345.9 471.0 346.0 466.0C346.1 461.0 346.0 454.7 346.7 450.0C347.4 445.3 348.3 441.3 350.0 438.0C351.7 434.7 355.0 433.3 356.7 430.0C358.4 426.7 357.8 421.3 360.0 418.0C362.2 414.7 366.0 413.3 370.0 410.0C374.0 406.7 379.0 402.2 384.0 398.0C389.0 393.8 394.0 389.7 400.0 385.0C406.0 380.3 412.5 375.0 420.0 370.0C427.5 365.0 437.2 359.4 445.0 355.0C452.8 350.6 460.9 345.8 466.7 343.3C472.5 340.8 476.4 341.4 480.0 340.0C483.6 338.6 484.7 336.7 488.0 335.0C491.3 333.3 495.2 330.8 500.0 330.0C504.8 329.2 510.6 331.1 516.7 330.0C522.8 328.9 529.8 324.6 536.7 323.3C543.6 322.1 552.5 323.6 558.0 322.5C563.5 321.4 566.9 317.5 570.0 316.7C573.1 315.9 573.9 316.7 576.7 317.5C579.5 318.3 583.4 321.4 586.7 321.7C590.0 321.9 592.8 320.8 596.7 319.0C600.6 317.2 606.1 312.8 610.0 311.0C613.9 309.2 616.2 308.3 620.0 308.3C623.8 308.3 628.0 310.7 633.0 311.0C638.0 311.3 644.4 310.3 650.0 310.0C655.6 309.7 661.7 309.0 666.7 309.0C671.7 309.0 676.1 309.3 680.0 310.0C683.9 310.7 686.7 312.9 690.0 313.3C693.3 313.7 696.7 312.9 700.0 312.5C703.3 312.1 706.2 310.2 710.0 310.8C713.8 311.4 718.0 315.1 723.0 315.8C728.0 316.5 734.4 314.6 740.0 315.0C745.6 315.4 751.2 318.3 756.7 318.3C762.2 318.3 768.6 315.1 773.0 315.0C777.4 314.9 780.2 316.5 783.0 317.5C785.8 318.5 786.7 320.6 790.0 320.8C793.3 321.1 798.8 319.8 803.0 319.0C807.2 318.2 810.8 315.6 815.0 315.8C819.2 316.0 822.5 317.8 828.0 320.0C833.5 322.2 842.2 327.8 848.0 329.0C853.8 330.2 858.5 328.7 863.0 327.5C867.5 326.3 870.5 322.1 875.0 321.7C879.5 321.3 886.4 324.2 890.0 325.0C893.6 325.8 892.9 325.7 896.7 326.7C900.5 327.7 908.1 328.9 913.0 330.8C917.9 332.7 921.3 335.7 925.8 337.8C930.2 339.9 935.3 341.7 939.7 343.3C944.1 344.9 948.1 346.7 952.0 347.5C955.9 348.3 959.7 347.1 963.0 348.0C966.3 348.9 969.1 350.3 971.7 353.0C974.3 355.7 975.6 361.2 978.6 364.0C981.6 366.8 987.0 367.5 989.7 369.7C992.4 371.9 992.7 375.5 995.0 377.0C997.3 378.5 1000.8 377.0 1003.6 378.8C1006.4 380.6 1009.4 385.4 1012.0 387.8C1014.6 390.2 1017.7 390.7 1019.0 393.0C1020.3 395.3 1018.7 399.4 1020.0 401.7C1021.3 404.0 1024.7 404.9 1027.0 407.0C1029.3 409.1 1031.7 411.4 1034.0 414.0C1036.3 416.6 1039.0 419.8 1041.0 422.5C1043.0 425.2 1044.5 427.5 1046.0 430.0C1047.5 432.5 1048.5 435.0 1050.0 437.5C1051.5 440.0 1053.8 442.1 1055.0 445.0C1056.2 447.9 1056.8 452.0 1057.0 455.0C1057.2 458.0 1055.8 461.0 1056.5 463.0C1057.2 465.0 1059.8 464.8 1061.0 467.0C1062.2 469.2 1063.8 472.2 1064.0 476.0C1064.2 479.8 1063.3 486.5 1062.5 490.0C1061.7 493.5 1059.8 494.9 1059.0 497.0C1058.2 499.1 1057.8 501.6 1057.5 502.5L1057.0 505.0C1055.8 506.8 1052.7 512.2 1050.0 516.0C1047.3 519.8 1043.7 524.2 1041.0 527.5C1038.3 530.8 1035.4 532.2 1034.0 536.0C1032.6 539.8 1033.2 546.8 1032.5 550.0C1031.8 553.2 1032.1 553.3 1030.0 555.0C1027.9 556.7 1023.3 558.5 1020.0 560.0C1016.7 561.5 1012.5 562.2 1010.0 564.0C1007.5 565.8 1006.2 569.0 1005.0 571.0C1003.8 573.0 1003.8 574.0 1003.0 576.0C1002.2 578.0 1002.5 580.7 1000.0 583.0C997.5 585.3 992.7 587.7 988.0 590.0C983.3 592.3 975.2 594.5 971.7 596.7C968.2 598.9 967.8 600.5 966.7 603.0C965.6 605.5 966.7 609.4 965.0 611.7C963.3 614.0 961.4 615.7 956.7 616.7C952.0 617.8 941.7 617.2 936.7 618.0C931.7 618.8 930.7 621.1 926.7 621.7C922.8 622.3 917.0 620.7 913.0 621.7C909.0 622.8 906.8 625.3 903.0 628.0C899.2 630.7 894.4 634.9 890.0 638.0C885.6 641.1 880.6 645.5 876.7 646.7C872.8 647.9 870.7 646.5 866.7 645.0C862.8 643.5 856.3 638.3 853.0 638.0C849.7 637.7 849.2 640.2 846.7 643.0C844.2 645.8 841.3 651.3 838.0 655.0C834.7 658.7 831.4 662.5 826.7 665.0C822.0 667.5 815.6 669.7 810.0 670.0C804.4 670.3 798.0 668.4 793.0 666.7C788.0 665.0 783.3 661.0 780.0 660.0C776.7 659.0 776.3 660.7 773.0 661.0C769.7 661.3 764.4 660.8 760.0 661.7C755.6 662.7 750.9 665.0 746.7 666.7C742.5 668.4 739.0 670.9 735.0 671.7C731.0 672.5 727.2 672.5 723.0 671.7C718.8 670.9 714.2 668.4 710.0 666.7C705.8 665.0 701.9 662.8 698.0 661.7C694.1 660.6 690.9 659.9 686.7 660.0C682.5 660.1 677.5 661.2 673.0 662.5C668.5 663.8 663.8 666.6 660.0 667.5C656.2 668.4 652.7 668.6 650.0 668.0C647.3 667.4 645.7 665.1 644.0 664.0C642.3 662.9 642.3 662.8 640.0 661.5C637.7 660.2 633.3 657.8 630.0 656.5C626.7 655.2 623.3 654.5 620.0 654.0C616.7 653.5 613.3 653.8 610.0 653.5C606.7 653.2 603.3 652.4 600.0 652.5C596.7 652.6 593.3 653.6 590.0 654.0C586.7 654.4 583.3 655.2 580.0 655.0C576.7 654.8 573.3 653.7 570.0 652.5C566.7 651.3 563.3 649.8 560.0 648.0C556.7 646.2 553.0 644.2 550.0 642.0C547.0 639.8 544.5 636.7 542.0 635.0C539.5 633.3 538.7 632.5 535.0 632.0C531.3 631.5 524.2 632.1 520.0 632.0C515.8 631.9 513.3 631.4 510.0 631.5C506.7 631.6 503.1 632.5 500.0 632.5C496.9 632.5 495.6 632.0 491.7 631.7C487.8 631.5 480.9 632.5 476.7 631.0C472.5 629.5 470.3 625.7 466.7 623.0C463.1 620.3 458.6 617.2 455.0 615.0C451.4 612.8 448.7 611.4 445.0 610.0C441.3 608.6 436.9 608.1 433.0 606.7C429.1 605.3 424.7 604.0 421.7 601.7C418.7 599.4 417.3 595.5 415.0 593.0C412.7 590.5 411.1 588.9 408.0 586.7C404.9 584.5 399.7 583.1 396.7 580.0C393.7 576.9 392.5 571.3 390.0 568.0C387.5 564.7 385.4 563.0 381.7 560.0C378.0 557.0 371.6 553.0 368.0 550.0C364.4 547.0 362.0 545.4 360.0 541.7C358.0 538.0 357.2 532.8 356.0 528.0C354.8 523.2 353.2 517.7 352.5 513.0C351.8 508.3 352.4 503.8 351.5 500.0C350.6 496.2 347.8 491.7 347.0 490.0Z" fill="#e0ab58" stroke="#432f08" stroke-width="1.4" stroke-linejoin="round"/>
<path d="M346.0 480.0C346.0 477.7 345.9 471.0 346.0 466.0C346.1 461.0 346.0 454.7 346.7 450.0C347.4 445.3 348.3 441.3 350.0 438.0C351.7 434.7 355.0 433.3 356.7 430.0C358.4 426.7 357.8 421.3 360.0 418.0C362.2 414.7 366.0 413.3 370.0 410.0C374.0 406.7 379.0 402.2 384.0 398.0C389.0 393.8 394.0 389.7 400.0 385.0C406.0 380.3 412.5 375.0 420.0 370.0C427.5 365.0 437.2 359.4 445.0 355.0C452.8 350.6 460.9 345.8 466.7 343.3C472.5 340.8 476.4 341.4 480.0 340.0C483.6 338.6 484.7 336.7 488.0 335.0C491.3 333.3 495.2 330.8 500.0 330.0C504.8 329.2 510.6 331.1 516.7 330.0C522.8 328.9 529.8 324.6 536.7 323.3C543.6 322.1 552.5 323.6 558.0 322.5C563.5 321.4 566.9 317.5 570.0 316.7C573.1 315.9 573.9 316.7 576.7 317.5C579.5 318.3 583.4 321.4 586.7 321.7C590.0 321.9 592.8 320.8 596.7 319.0C600.6 317.2 606.1 312.8 610.0 311.0C613.9 309.2 616.2 308.3 620.0 308.3C623.8 308.3 628.0 310.7 633.0 311.0C638.0 311.3 644.4 310.3 650.0 310.0C655.6 309.7 661.7 309.0 666.7 309.0C671.7 309.0 676.1 309.3 680.0 310.0C683.9 310.7 686.7 312.9 690.0 313.3C693.3 313.7 696.7 312.9 700.0 312.5C703.3 312.1 706.2 310.2 710.0 310.8C713.8 311.4 718.0 315.1 723.0 315.8C728.0 316.5 734.4 314.6 740.0 315.0C745.6 315.4 751.2 318.3 756.7 318.3C762.2 318.3 768.6 315.1 773.0 315.0C777.4 314.9 780.2 316.5 783.0 317.5C785.8 318.5 786.7 320.6 790.0 320.8C793.3 321.1 798.8 319.8 803.0 319.0C807.2 318.2 810.8 315.6 815.0 315.8C819.2 316.0 822.5 317.8 828.0 320.0C833.5 322.2 842.2 327.8 848.0 329.0C853.8 330.2 858.5 328.7 863.0 327.5C867.5 326.3 870.5 322.1 875.0 321.7C879.5 321.3 886.4 324.2 890.0 325.0C893.6 325.8 892.9 325.7 896.7 326.7C900.5 327.7 908.1 328.9 913.0 330.8C917.9 332.7 921.3 335.7 925.8 337.8C930.2 339.9 935.3 341.7 939.7 343.3C944.1 344.9 948.1 346.7 952.0 347.5C955.9 348.3 959.7 347.1 963.0 348.0C966.3 348.9 969.1 350.3 971.7 353.0C974.3 355.7 975.6 361.2 978.6 364.0C981.6 366.8 987.0 367.5 989.7 369.7C992.4 371.9 992.7 375.5 995.0 377.0C997.3 378.5 1000.8 377.0 1003.6 378.8C1006.4 380.6 1009.4 385.4 1012.0 387.8C1014.6 390.2 1017.7 390.7 1019.0 393.0C1020.3 395.3 1018.7 399.4 1020.0 401.7C1021.3 404.0 1024.7 404.9 1027.0 407.0C1029.3 409.1 1031.7 411.4 1034.0 414.0C1036.3 416.6 1039.0 419.8 1041.0 422.5C1043.0 425.2 1044.5 427.5 1046.0 430.0C1047.5 432.5 1048.5 435.0 1050.0 437.5C1051.5 440.0 1053.8 442.1 1055.0 445.0C1056.2 447.9 1056.8 452.0 1057.0 455.0C1057.2 458.0 1055.8 461.0 1056.5 463.0C1057.2 465.0 1059.8 464.8 1061.0 467.0C1062.2 469.2 1063.8 472.2 1064.0 476.0C1064.2 479.8 1063.3 486.5 1062.5 490.0C1061.7 493.5 1059.8 494.9 1059.0 497.0C1058.2 499.1 1057.8 501.6 1057.5 502.5L1056.0 500.0C1055.0 501.2 1052.5 504.8 1050.0 507.5C1047.5 510.2 1043.9 512.9 1041.0 516.0C1038.1 519.1 1033.8 522.4 1032.5 526.0C1031.2 529.6 1033.4 534.2 1033.0 537.5C1032.6 540.8 1032.2 543.9 1030.0 546.0C1027.8 548.1 1023.3 548.9 1020.0 550.0C1016.7 551.1 1012.7 550.8 1010.0 552.5C1007.3 554.2 1005.0 557.1 1003.8 560.0C1002.5 562.9 1003.7 567.2 1002.5 570.0C1001.3 572.8 1000.5 575.0 996.7 576.7C993.0 578.4 984.8 578.6 980.0 580.0C975.2 581.4 970.5 582.8 968.0 585.0C965.5 587.2 965.3 590.2 965.0 593.0C964.7 595.8 967.7 599.7 966.0 601.7C964.3 603.7 959.9 604.5 955.0 605.0C950.1 605.5 941.4 604.5 936.7 605.0C932.0 605.5 930.7 607.5 926.7 608.0C922.8 608.5 917.0 606.8 913.0 608.0C909.0 609.2 907.2 611.9 903.0 615.0C898.8 618.1 892.4 623.7 888.0 626.7C883.6 629.7 880.2 632.2 876.7 633.0C873.2 633.8 870.7 633.0 866.7 631.7C862.8 630.4 856.3 625.3 853.0 625.0C849.7 624.7 849.2 627.0 846.7 630.0C844.2 633.0 841.3 639.2 838.0 643.0C834.7 646.8 831.4 650.7 826.7 653.0C822.0 655.3 815.6 656.7 810.0 656.7C804.4 656.7 798.0 654.5 793.0 653.0C788.0 651.5 783.3 648.9 780.0 648.0C776.7 647.1 776.3 647.5 773.0 647.5C769.7 647.5 764.4 647.2 760.0 648.0C755.6 648.8 750.9 650.9 746.7 652.5C742.5 654.1 739.0 656.7 735.0 657.5C731.0 658.3 727.2 658.2 723.0 657.5C718.8 656.8 714.2 654.6 710.0 653.0C705.8 651.4 701.9 649.0 698.0 648.0C694.1 647.0 690.9 646.7 686.7 646.7C682.5 646.7 677.5 647.0 673.0 648.0C668.5 649.0 663.8 652.0 660.0 653.0C656.2 654.0 652.7 654.3 650.0 654.0C647.3 653.7 645.7 651.8 644.0 651.0C642.3 650.2 642.3 650.2 640.0 649.0C637.7 647.8 633.3 645.3 630.0 644.0C626.7 642.7 623.3 641.5 620.0 641.0C616.7 640.5 613.3 641.2 610.0 641.0C606.7 640.8 603.3 639.5 600.0 639.5C596.7 639.5 593.3 640.7 590.0 641.0C586.7 641.3 583.3 641.7 580.0 641.5C576.7 641.3 573.3 640.9 570.0 640.0C566.7 639.1 563.3 637.7 560.0 636.0C556.7 634.3 553.0 632.2 550.0 630.0C547.0 627.8 544.5 624.8 542.0 623.0C539.5 621.2 538.7 620.2 535.0 619.5C531.3 618.8 524.2 619.2 520.0 619.0C515.8 618.8 513.3 618.3 510.0 618.5C506.7 618.7 503.1 619.8 500.0 620.0C496.9 620.2 495.4 620.3 491.7 620.0C488.0 619.7 482.2 619.4 478.0 618.0C473.8 616.6 470.5 614.2 466.7 611.7C462.9 609.2 458.6 605.3 455.0 603.0C451.4 600.7 448.7 599.3 445.0 598.0C441.3 596.7 436.7 596.3 433.0 595.0C429.3 593.7 425.5 592.0 423.0 590.0C420.5 588.0 419.9 585.1 418.0 583.0C416.1 580.9 414.4 579.2 411.7 577.5C409.0 575.8 404.5 575.4 401.7 573.0C398.9 570.6 397.3 566.3 395.0 563.0C392.7 559.7 390.8 555.7 388.0 553.0C385.2 550.3 381.6 548.9 378.0 546.7C374.4 544.5 370.0 543.3 366.7 540.0C363.4 536.7 360.3 531.5 358.0 527.0C355.7 522.5 354.0 517.5 353.0 513.0C352.0 508.5 353.0 503.8 352.0 500.0C351.0 496.2 347.8 491.7 347.0 490.0Z" fill="#ebb967" stroke="#432f08" stroke-width="1.4" stroke-linejoin="round"/>
<g clip-path="url(#cS3)"><path d="M346.0 480.0C346.0 477.7 345.9 471.0 346.0 466.0C346.1 461.0 346.0 454.7 346.7 450.0C347.4 445.3 348.3 441.3 350.0 438.0C351.7 434.7 355.0 433.3 356.7 430.0C358.4 426.7 357.8 421.3 360.0 418.0C362.2 414.7 366.0 413.3 370.0 410.0C374.0 406.7 379.0 402.2 384.0 398.0C389.0 393.8 394.0 389.7 400.0 385.0C406.0 380.3 412.5 375.0 420.0 370.0C427.5 365.0 437.2 359.4 445.0 355.0C452.8 350.6 460.9 345.8 466.7 343.3C472.5 340.8 476.4 341.4 480.0 340.0C483.6 338.6 484.7 336.7 488.0 335.0C491.3 333.3 495.2 330.8 500.0 330.0C504.8 329.2 510.6 331.1 516.7 330.0C522.8 328.9 529.8 324.6 536.7 323.3C543.6 322.1 552.5 323.6 558.0 322.5C563.5 321.4 566.9 317.5 570.0 316.7C573.1 315.9 573.9 316.7 576.7 317.5C579.5 318.3 583.4 321.4 586.7 321.7C590.0 321.9 592.8 320.8 596.7 319.0C600.6 317.2 606.1 312.8 610.0 311.0C613.9 309.2 616.2 308.3 620.0 308.3C623.8 308.3 628.0 310.7 633.0 311.0C638.0 311.3 644.4 310.3 650.0 310.0C655.6 309.7 661.7 309.0 666.7 309.0C671.7 309.0 676.1 309.3 680.0 310.0C683.9 310.7 686.7 312.9 690.0 313.3C693.3 313.7 696.7 312.9 700.0 312.5C703.3 312.1 706.2 310.2 710.0 310.8C713.8 311.4 718.0 315.1 723.0 315.8C728.0 316.5 734.4 314.6 740.0 315.0C745.6 315.4 751.2 318.3 756.7 318.3C762.2 318.3 768.6 315.1 773.0 315.0C777.4 314.9 780.2 316.5 783.0 317.5C785.8 318.5 786.7 320.6 790.0 320.8C793.3 321.1 798.8 319.8 803.0 319.0C807.2 318.2 810.8 315.6 815.0 315.8C819.2 316.0 822.5 317.8 828.0 320.0C833.5 322.2 842.2 327.8 848.0 329.0C853.8 330.2 858.5 328.7 863.0 327.5C867.5 326.3 870.5 322.1 875.0 321.7C879.5 321.3 886.4 324.2 890.0 325.0C893.6 325.8 892.9 325.7 896.7 326.7C900.5 327.7 908.1 328.9 913.0 330.8C917.9 332.7 921.3 335.7 925.8 337.8C930.2 339.9 935.3 341.7 939.7 343.3C944.1 344.9 948.1 346.7 952.0 347.5C955.9 348.3 959.7 347.1 963.0 348.0C966.3 348.9 969.1 350.3 971.7 353.0C974.3 355.7 975.6 361.2 978.6 364.0C981.6 366.8 987.0 367.5 989.7 369.7C992.4 371.9 992.7 375.5 995.0 377.0C997.3 378.5 1000.8 377.0 1003.6 378.8C1006.4 380.6 1009.4 385.4 1012.0 387.8C1014.6 390.2 1017.7 390.7 1019.0 393.0C1020.3 395.3 1018.7 399.4 1020.0 401.7C1021.3 404.0 1024.7 404.9 1027.0 407.0C1029.3 409.1 1031.7 411.4 1034.0 414.0C1036.3 416.6 1039.0 419.8 1041.0 422.5C1043.0 425.2 1044.5 427.5 1046.0 430.0C1047.5 432.5 1048.5 435.0 1050.0 437.5C1051.5 440.0 1053.8 442.1 1055.0 445.0C1056.2 447.9 1056.8 452.0 1057.0 455.0C1057.2 458.0 1055.8 461.0 1056.5 463.0C1057.2 465.0 1059.8 464.8 1061.0 467.0C1062.2 469.2 1063.8 472.2 1064.0 476.0C1064.2 479.8 1063.3 486.5 1062.5 490.0C1061.7 493.5 1059.8 494.9 1059.0 497.0C1058.2 499.1 1057.8 501.6 1057.5 502.5" fill="none" stroke="#432f08" stroke-width="3.4"/><path d="M360.0 418.0C361.7 416.7 366.0 413.3 370.0 410.0C374.0 406.7 379.0 402.2 384.0 398.0C389.0 393.8 394.0 389.7 400.0 385.0C406.0 380.3 412.5 375.0 420.0 370.0C427.5 365.0 437.2 359.4 445.0 355.0C452.8 350.6 460.9 345.8 466.7 343.3C472.5 340.8 476.4 341.4 480.0 340.0C483.6 338.6 484.7 336.7 488.0 335.0C491.3 333.3 495.2 330.8 500.0 330.0C504.8 329.2 510.6 331.1 516.7 330.0C522.8 328.9 529.8 324.6 536.7 323.3C543.6 322.1 552.5 323.6 558.0 322.5C563.5 321.4 566.9 317.5 570.0 316.7C573.1 315.9 573.9 316.7 576.7 317.5C579.5 318.3 583.4 321.4 586.7 321.7C590.0 321.9 592.8 320.8 596.7 319.0C600.6 317.2 606.1 312.8 610.0 311.0C613.9 309.2 616.2 308.3 620.0 308.3C623.8 308.3 628.0 310.7 633.0 311.0C638.0 311.3 644.4 310.3 650.0 310.0C655.6 309.7 661.7 309.0 666.7 309.0C671.7 309.0 676.1 309.3 680.0 310.0C683.9 310.7 686.7 312.9 690.0 313.3C693.3 313.7 696.7 312.9 700.0 312.5C703.3 312.1 706.2 310.2 710.0 310.8C713.8 311.4 718.0 315.1 723.0 315.8C728.0 316.5 734.4 314.6 740.0 315.0C745.6 315.4 751.2 318.3 756.7 318.3C762.2 318.3 768.6 315.1 773.0 315.0C777.4 314.9 780.2 316.5 783.0 317.5C785.8 318.5 786.7 320.6 790.0 320.8C793.3 321.1 798.8 319.8 803.0 319.0C807.2 318.2 810.8 315.6 815.0 315.8C819.2 316.0 822.5 317.8 828.0 320.0C833.5 322.2 842.2 327.8 848.0 329.0C853.8 330.2 858.5 328.7 863.0 327.5C867.5 326.3 870.5 322.1 875.0 321.7C879.5 321.3 886.4 324.2 890.0 325.0C893.6 325.8 892.9 325.7 896.7 326.7C900.5 327.7 908.1 328.9 913.0 330.8C917.9 332.7 921.3 335.7 925.8 337.8C930.2 339.9 935.3 341.7 939.7 343.3C944.1 344.9 948.1 346.7 952.0 347.5C955.9 348.3 959.7 347.1 963.0 348.0C966.3 348.9 969.1 350.3 971.7 353.0C974.3 355.7 975.6 361.2 978.6 364.0C981.6 366.8 987.0 367.5 989.7 369.7C992.4 371.9 992.7 375.5 995.0 377.0C997.3 378.5 1000.8 377.0 1003.6 378.8C1006.4 380.6 1009.4 385.4 1012.0 387.8C1014.6 390.2 1017.7 390.7 1019.0 393.0C1020.3 395.3 1018.7 399.4 1020.0 401.7C1021.3 404.0 1024.7 404.9 1027.0 407.0C1029.3 409.1 1031.7 411.4 1034.0 414.0C1036.3 416.6 1039.0 419.8 1041.0 422.5C1043.0 425.2 1044.5 427.5 1046.0 430.0C1047.5 432.5 1048.5 435.0 1050.0 437.5C1051.5 440.0 1053.8 442.1 1055.0 445.0C1056.2 447.9 1056.8 452.0 1057.0 455.0C1057.2 458.0 1055.8 461.0 1056.5 463.0C1057.2 465.0 1059.8 464.8 1061.0 467.0C1062.2 469.2 1063.8 472.2 1064.0 476.0C1064.2 479.8 1063.3 486.5 1062.5 490.0C1061.7 493.5 1059.8 494.9 1059.0 497.0C1058.2 499.1 1057.8 501.6 1057.5 502.5" fill="none" stroke="#432f08" stroke-width="7.4" stroke-linecap="round"/><path d="M360.0 418.0C361.7 416.7 366.0 413.3 370.0 410.0C374.0 406.7 379.0 402.2 384.0 398.0C389.0 393.8 394.0 389.7 400.0 385.0C406.0 380.3 412.5 375.0 420.0 370.0C427.5 365.0 437.2 359.4 445.0 355.0C452.8 350.6 460.9 345.8 466.7 343.3C472.5 340.8 476.4 341.4 480.0 340.0C483.6 338.6 484.7 336.7 488.0 335.0C491.3 333.3 495.2 330.8 500.0 330.0C504.8 329.2 510.6 331.1 516.7 330.0C522.8 328.9 529.8 324.6 536.7 323.3C543.6 322.1 552.5 323.6 558.0 322.5C563.5 321.4 566.9 317.5 570.0 316.7C573.1 315.9 573.9 316.7 576.7 317.5C579.5 318.3 583.4 321.4 586.7 321.7C590.0 321.9 592.8 320.8 596.7 319.0C600.6 317.2 606.1 312.8 610.0 311.0C613.9 309.2 616.2 308.3 620.0 308.3C623.8 308.3 628.0 310.7 633.0 311.0C638.0 311.3 644.4 310.3 650.0 310.0C655.6 309.7 661.7 309.0 666.7 309.0C671.7 309.0 676.1 309.3 680.0 310.0C683.9 310.7 686.7 312.9 690.0 313.3C693.3 313.7 696.7 312.9 700.0 312.5C703.3 312.1 706.2 310.2 710.0 310.8C713.8 311.4 718.0 315.1 723.0 315.8C728.0 316.5 734.4 314.6 740.0 315.0C745.6 315.4 751.2 318.3 756.7 318.3C762.2 318.3 768.6 315.1 773.0 315.0C777.4 314.9 780.2 316.5 783.0 317.5C785.8 318.5 786.7 320.6 790.0 320.8C793.3 321.1 798.8 319.8 803.0 319.0C807.2 318.2 810.8 315.6 815.0 315.8C819.2 316.0 822.5 317.8 828.0 320.0C833.5 322.2 842.2 327.8 848.0 329.0C853.8 330.2 858.5 328.7 863.0 327.5C867.5 326.3 870.5 322.1 875.0 321.7C879.5 321.3 886.4 324.2 890.0 325.0C893.6 325.8 892.9 325.7 896.7 326.7C900.5 327.7 908.1 328.9 913.0 330.8C917.9 332.7 921.3 335.7 925.8 337.8C930.2 339.9 935.3 341.7 939.7 343.3C944.1 344.9 948.1 346.7 952.0 347.5C955.9 348.3 959.7 347.1 963.0 348.0C966.3 348.9 969.1 350.3 971.7 353.0C974.3 355.7 975.6 361.2 978.6 364.0C981.6 366.8 987.0 367.5 989.7 369.7C992.4 371.9 992.7 375.5 995.0 377.0C997.3 378.5 1000.8 377.0 1003.6 378.8C1006.4 380.6 1009.4 385.4 1012.0 387.8C1014.6 390.2 1017.7 390.7 1019.0 393.0C1020.3 395.3 1018.7 399.4 1020.0 401.7C1021.3 404.0 1024.7 404.9 1027.0 407.0C1029.3 409.1 1031.7 411.4 1034.0 414.0C1036.3 416.6 1039.0 419.8 1041.0 422.5C1043.0 425.2 1044.5 427.5 1046.0 430.0C1047.5 432.5 1048.5 435.0 1050.0 437.5C1051.5 440.0 1053.8 442.1 1055.0 445.0C1056.2 447.9 1056.8 452.0 1057.0 455.0C1057.2 458.0 1055.8 461.0 1056.5 463.0C1057.2 465.0 1059.8 464.8 1061.0 467.0C1062.2 469.2 1063.8 472.2 1064.0 476.0C1064.2 479.8 1063.3 486.5 1062.5 490.0C1061.7 493.5 1059.8 494.9 1059.0 497.0C1058.2 499.1 1057.8 501.6 1057.5 502.5" fill="none" stroke="#d9a53d" stroke-width="5.2" stroke-linecap="round"/><path d="M346.0 480.0C346.0 477.7 345.9 471.0 346.0 466.0C346.1 461.0 346.0 454.7 346.7 450.0C347.4 445.3 348.3 441.3 350.0 438.0C351.7 434.7 355.0 433.3 356.7 430.0C358.4 426.7 357.8 421.3 360.0 418.0C362.2 414.7 366.0 413.3 370.0 410.0C374.0 406.7 379.0 402.2 384.0 398.0C389.0 393.8 394.0 389.7 400.0 385.0C406.0 380.3 412.5 375.0 420.0 370.0C427.5 365.0 437.2 359.4 445.0 355.0C452.8 350.6 460.9 345.8 466.7 343.3C472.5 340.8 476.4 341.4 480.0 340.0C483.6 338.6 484.7 336.7 488.0 335.0C491.3 333.3 495.2 330.8 500.0 330.0C504.8 329.2 510.6 331.1 516.7 330.0C522.8 328.9 529.8 324.6 536.7 323.3C543.6 322.1 552.5 323.6 558.0 322.5C563.5 321.4 566.9 317.5 570.0 316.7C573.1 315.9 573.9 316.7 576.7 317.5C579.5 318.3 583.4 321.4 586.7 321.7C590.0 321.9 592.8 320.8 596.7 319.0C600.6 317.2 606.1 312.8 610.0 311.0C613.9 309.2 616.2 308.3 620.0 308.3C623.8 308.3 628.0 310.7 633.0 311.0C638.0 311.3 644.4 310.3 650.0 310.0C655.6 309.7 661.7 309.0 666.7 309.0C671.7 309.0 676.1 309.3 680.0 310.0C683.9 310.7 686.7 312.9 690.0 313.3C693.3 313.7 696.7 312.9 700.0 312.5C703.3 312.1 706.2 310.2 710.0 310.8C713.8 311.4 718.0 315.1 723.0 315.8C728.0 316.5 734.4 314.6 740.0 315.0C745.6 315.4 751.2 318.3 756.7 318.3C762.2 318.3 768.6 315.1 773.0 315.0C777.4 314.9 780.2 316.5 783.0 317.5C785.8 318.5 786.7 320.6 790.0 320.8C793.3 321.1 798.8 319.8 803.0 319.0C807.2 318.2 810.8 315.6 815.0 315.8C819.2 316.0 822.5 317.8 828.0 320.0C833.5 322.2 842.2 327.8 848.0 329.0C853.8 330.2 858.5 328.7 863.0 327.5C867.5 326.3 870.5 322.1 875.0 321.7C879.5 321.3 886.4 324.2 890.0 325.0C893.6 325.8 892.9 325.7 896.7 326.7C900.5 327.7 908.1 328.9 913.0 330.8C917.9 332.7 921.3 335.7 925.8 337.8C930.2 339.9 935.3 341.7 939.7 343.3C944.1 344.9 948.1 346.7 952.0 347.5C955.9 348.3 959.7 347.1 963.0 348.0C966.3 348.9 969.1 350.3 971.7 353.0C974.3 355.7 975.6 361.2 978.6 364.0C981.6 366.8 987.0 367.5 989.7 369.7C992.4 371.9 992.7 375.5 995.0 377.0C997.3 378.5 1000.8 377.0 1003.6 378.8C1006.4 380.6 1009.4 385.4 1012.0 387.8C1014.6 390.2 1017.7 390.7 1019.0 393.0C1020.3 395.3 1018.7 399.4 1020.0 401.7C1021.3 404.0 1024.7 404.9 1027.0 407.0C1029.3 409.1 1031.7 411.4 1034.0 414.0C1036.3 416.6 1039.0 419.8 1041.0 422.5C1043.0 425.2 1044.5 427.5 1046.0 430.0C1047.5 432.5 1048.5 435.0 1050.0 437.5C1051.5 440.0 1053.8 442.1 1055.0 445.0C1056.2 447.9 1056.8 452.0 1057.0 455.0C1057.2 458.0 1055.8 461.0 1056.5 463.0C1057.2 465.0 1059.8 464.8 1061.0 467.0C1062.2 469.2 1063.8 472.2 1064.0 476.0C1064.2 479.8 1063.3 486.5 1062.5 490.0C1061.7 493.5 1059.8 494.9 1059.0 497.0C1058.2 499.1 1057.8 501.6 1057.5 502.5" fill="none" stroke="#432f08" stroke-width="2"/></g>
<path d="M445.0 383.0C448.6 381.1 457.5 374.7 466.7 371.7C475.9 368.7 491.7 367.4 500.0 365.0C508.3 362.6 511.2 360.0 516.7 357.5C522.2 355.0 527.5 351.8 533.0 350.0C538.5 348.2 544.4 347.9 550.0 346.7C555.6 345.4 561.2 343.6 566.7 342.5C572.2 341.4 577.5 341.0 583.0 340.0C588.5 339.0 594.4 337.7 600.0 336.7C605.6 335.7 611.2 333.8 616.7 334.0C622.2 334.2 628.8 337.0 633.0 338.0C637.2 339.0 637.5 340.5 641.7 340.0C645.9 339.5 652.5 336.8 658.0 335.0C663.5 333.2 670.8 330.2 675.0 329.0C679.2 327.8 680.5 327.7 683.0 328.0C685.5 328.3 687.2 330.0 690.0 331.0C692.8 332.0 695.0 333.1 700.0 334.0C705.0 334.9 715.0 336.5 720.0 336.7C725.0 336.9 725.8 334.3 730.0 335.0C734.2 335.7 739.2 340.7 745.0 341.0C750.8 341.3 758.7 337.3 765.0 336.7C771.3 336.1 776.7 337.4 783.0 337.5C789.3 337.6 796.8 337.9 803.0 337.5C809.2 337.1 815.0 333.8 820.0 335.0C825.0 336.2 828.0 342.8 833.0 345.0C838.0 347.2 843.8 347.2 850.0 348.0C856.2 348.8 864.7 348.6 870.0 350.0C875.3 351.4 877.9 353.9 881.7 356.7C885.5 359.5 889.5 363.6 893.0 366.7C896.5 369.8 899.2 373.6 903.0 375.0C906.8 376.4 911.3 375.4 916.0 375.0C920.7 374.6 927.4 371.8 931.4 372.5C935.4 373.2 936.7 376.6 939.7 379.4C942.7 382.1 945.9 385.7 949.4 389.0C952.9 392.3 957.1 397.3 960.5 399.0C963.9 400.7 966.8 398.3 970.0 399.0C973.2 399.7 976.7 401.2 980.0 403.0C983.3 404.8 987.9 407.2 989.7 410.0C991.5 412.8 990.8 418.1 991.0 419.7" fill="none" stroke="#432f08" stroke-width="6.8" stroke-linecap="round"/>
<path d="M445.0 383.0C448.6 381.1 457.5 374.7 466.7 371.7C475.9 368.7 491.7 367.4 500.0 365.0C508.3 362.6 511.2 360.0 516.7 357.5C522.2 355.0 527.5 351.8 533.0 350.0C538.5 348.2 544.4 347.9 550.0 346.7C555.6 345.4 561.2 343.6 566.7 342.5C572.2 341.4 577.5 341.0 583.0 340.0C588.5 339.0 594.4 337.7 600.0 336.7C605.6 335.7 611.2 333.8 616.7 334.0C622.2 334.2 628.8 337.0 633.0 338.0C637.2 339.0 637.5 340.5 641.7 340.0C645.9 339.5 652.5 336.8 658.0 335.0C663.5 333.2 670.8 330.2 675.0 329.0C679.2 327.8 680.5 327.7 683.0 328.0C685.5 328.3 687.2 330.0 690.0 331.0C692.8 332.0 695.0 333.1 700.0 334.0C705.0 334.9 715.0 336.5 720.0 336.7C725.0 336.9 725.8 334.3 730.0 335.0C734.2 335.7 739.2 340.7 745.0 341.0C750.8 341.3 758.7 337.3 765.0 336.7C771.3 336.1 776.7 337.4 783.0 337.5C789.3 337.6 796.8 337.9 803.0 337.5C809.2 337.1 815.0 333.8 820.0 335.0C825.0 336.2 828.0 342.8 833.0 345.0C838.0 347.2 843.8 347.2 850.0 348.0C856.2 348.8 864.7 348.6 870.0 350.0C875.3 351.4 877.9 353.9 881.7 356.7C885.5 359.5 889.5 363.6 893.0 366.7C896.5 369.8 899.2 373.6 903.0 375.0C906.8 376.4 911.3 375.4 916.0 375.0C920.7 374.6 927.4 371.8 931.4 372.5C935.4 373.2 936.7 376.6 939.7 379.4C942.7 382.1 945.9 385.7 949.4 389.0C952.9 392.3 957.1 397.3 960.5 399.0C963.9 400.7 966.8 398.3 970.0 399.0C973.2 399.7 976.7 401.2 980.0 403.0C983.3 404.8 987.9 407.2 989.7 410.0C991.5 412.8 990.8 418.1 991.0 419.7" fill="none" stroke="#dba73e" stroke-width="4.8" stroke-linecap="round"/>
<path d="M991.0 419.7C992.5 421.6 997.2 427.2 1000.0 431.0C1002.8 434.8 1005.7 438.5 1007.5 442.5C1009.3 446.5 1010.4 450.8 1010.6 455.0C1010.8 459.2 1009.7 463.8 1008.8 467.5C1007.9 471.2 1006.9 474.4 1005.0 477.5C1003.1 480.6 999.2 483.1 997.5 486.0C995.8 488.9 996.7 491.8 995.0 495.0C993.3 498.2 989.2 501.5 987.5 505.0C985.8 508.5 986.2 512.0 985.0 516.0C983.8 520.0 982.5 525.0 980.0 528.8C977.5 532.6 972.5 535.7 970.0 538.8C967.5 541.9 967.5 544.6 965.0 547.5C962.5 550.4 958.5 553.3 955.0 556.0C951.5 558.7 947.1 561.8 943.8 563.8C940.5 565.8 938.7 566.7 935.0 568.0C931.3 569.3 926.4 570.5 921.7 571.7C917.0 572.9 910.9 573.6 906.7 575.0C902.5 576.4 900.7 578.0 896.7 580.0C892.8 582.0 887.0 584.8 883.0 586.7C879.0 588.7 876.8 590.0 873.0 591.7C869.2 593.4 864.4 595.7 860.0 596.7C855.6 597.7 850.9 597.1 846.7 597.5C842.5 597.9 838.6 598.1 835.0 599.0C831.4 599.9 828.7 600.9 825.0 603.0C821.3 605.1 817.2 609.5 813.0 611.7C808.8 613.9 804.7 615.2 800.0 616.0C795.3 616.8 789.7 616.0 785.0 616.5C780.3 617.0 776.7 619.2 771.7 619.0C766.7 618.8 759.8 615.2 755.0 615.0C750.2 614.8 746.3 617.3 743.0 617.5C739.7 617.7 739.2 616.6 735.0 616.0C730.8 615.4 723.8 614.0 718.0 614.0C712.2 614.0 705.5 614.8 700.0 616.0C694.5 617.2 688.9 620.9 685.0 621.0C681.1 621.1 680.4 617.3 676.7 616.7C673.0 616.1 667.8 616.8 663.0 617.5C658.2 618.2 651.2 620.5 648.0 621.0C644.8 621.5 647.0 621.0 644.0 620.5C641.0 620.0 634.0 618.6 630.0 618.0C626.0 617.4 623.3 616.8 620.0 617.0C616.7 617.2 613.3 618.2 610.0 619.0C606.7 619.8 603.3 621.1 600.0 622.0C596.7 622.9 592.5 624.2 590.0 624.5C587.5 624.8 587.0 625.0 585.0 624.0C583.0 623.0 580.5 619.7 578.0 618.5C575.5 617.3 573.0 617.8 570.0 617.0C567.0 616.2 563.3 615.2 560.0 613.5C556.7 611.8 553.3 609.2 550.0 607.0C546.7 604.8 543.3 602.3 540.0 600.0C536.7 597.7 532.5 594.5 530.0 593.0C527.5 591.5 528.0 591.4 525.0 591.0C522.0 590.6 515.9 590.8 512.0 590.5C508.1 590.2 504.2 590.2 501.7 589.0C499.1 587.8 498.6 584.8 496.7 583.0C494.8 581.2 493.1 579.0 490.0 578.0C486.9 577.0 481.7 577.8 478.0 576.7C474.3 575.7 471.3 574.2 468.0 571.7C464.7 569.2 460.7 564.8 458.0 561.7C455.3 558.6 454.4 555.5 451.7 553.0C449.0 550.5 445.6 549.2 441.7 546.7C437.8 544.2 431.9 541.1 428.0 538.0C424.1 534.9 421.0 531.3 418.0 528.0C415.0 524.7 412.7 521.3 410.0 518.0C407.3 514.7 403.9 511.8 401.7 508.0C399.5 504.2 398.1 499.2 396.7 495.0C395.2 490.8 393.7 487.2 393.0 483.0C392.3 478.8 392.5 474.2 392.5 470.0C392.5 465.8 391.5 461.9 393.0 458.0C394.5 454.1 400.0 450.9 401.7 446.7C403.4 442.5 401.9 436.9 403.0 433.0C404.1 429.1 405.5 426.2 408.0 423.0C410.5 419.8 414.3 417.8 418.0 414.0C421.7 410.2 425.5 404.5 430.0 400.0C434.5 395.5 442.5 389.2 445.0 387.0" fill="none" stroke="#432f08" stroke-width="1.4"/>
<path d="M420.0 414.0C418.4 415.6 412.9 420.2 410.5 423.5C408.1 426.8 406.7 429.9 405.5 433.5C404.3 437.1 403.8 443.1 403.5 445.0" fill="none" stroke="#432f08" stroke-width="3.6" stroke-linecap="round"/>
<path d="M420.0 414.0C418.4 415.6 412.9 420.2 410.5 423.5C408.1 426.8 406.7 429.9 405.5 433.5C404.3 437.1 403.8 443.1 403.5 445.0" fill="none" stroke="#dba73e" stroke-width="1.6" stroke-linecap="round"/>
<path d="M402.0 448.5C401.3 449.4 399.3 451.9 398.0 454.0C396.7 456.1 394.7 459.8 394.0 461.0" fill="none" stroke="#432f08" stroke-width="3.6" stroke-linecap="round"/>
<path d="M402.0 448.5C401.3 449.4 399.3 451.9 398.0 454.0C396.7 456.1 394.7 459.8 394.0 461.0" fill="none" stroke="#dba73e" stroke-width="1.6" stroke-linecap="round"/>
<path d="M991.5 421.0C993.0 422.8 998.0 428.7 1000.5 432.0C1003.0 435.3 1005.5 439.5 1006.5 441.0" fill="none" stroke="#432f08" stroke-width="3.6" stroke-linecap="round"/>
<path d="M991.5 421.0C993.0 422.8 998.0 428.7 1000.5 432.0C1003.0 435.3 1005.5 439.5 1006.5 441.0" fill="none" stroke="#dba73e" stroke-width="1.6" stroke-linecap="round"/>
<path d="M467.0 358.0C467.3 356.8 475.8 352.0 480.0 350.0C484.2 348.0 489.0 346.5 492.0 346.0C495.0 345.5 498.3 346.2 498.0 347.0C497.7 347.8 493.3 349.3 490.0 351.0C486.7 352.7 481.8 355.8 478.0 357.0C474.2 358.2 466.7 359.2 467.0 358.0Z" fill="#eab763" stroke="#432f08" stroke-width="1.3" stroke-linejoin="round"/>
<path d="M525.0 339.0C525.0 338.5 532.5 334.5 536.7 333.0C540.9 331.5 545.6 331.2 550.0 330.0C554.4 328.8 559.2 326.8 563.0 325.8C566.8 324.8 570.5 324.0 573.0 324.0C575.5 324.0 577.2 325.2 578.0 325.8C578.8 326.4 579.4 327.1 577.5 327.5C575.6 327.9 570.8 327.2 566.7 328.0C562.6 328.8 558.0 331.2 553.0 332.5C548.0 333.8 541.4 334.7 536.7 335.8C532.0 336.9 525.0 339.5 525.0 339.0Z" fill="#eab763" stroke="#432f08" stroke-width="1.3" stroke-linejoin="round"/>
<path d="M607.0 323.0C607.2 322.6 611.3 319.9 613.3 318.9C615.3 317.8 617.2 317.1 618.9 316.7C620.6 316.3 621.6 316.5 623.3 316.7C625.0 316.9 626.1 317.8 628.9 317.8C631.7 317.8 636.3 316.9 640.0 316.7C643.7 316.5 646.5 316.4 651.0 316.4C655.5 316.3 664.3 316.2 667.0 316.4C669.7 316.6 669.7 317.0 667.0 317.4C664.3 317.8 656.4 317.9 651.0 318.5C645.6 319.1 638.8 320.5 634.4 320.7C630.0 320.9 627.3 319.8 624.4 319.6C621.5 319.4 618.8 319.3 616.7 319.6C614.6 319.9 613.6 320.6 612.0 321.2C610.4 321.8 606.8 323.4 607.0 323.0Z" fill="#eab763" stroke="#432f08" stroke-width="1.3" stroke-linejoin="round"/>
<path d="M696.0 321.7C695.7 321.1 705.5 319.1 710.0 319.0C714.5 318.9 718.0 320.6 723.0 320.8C728.0 321.0 734.2 319.3 740.0 320.0C745.8 320.7 754.7 324.0 757.5 325.0C760.3 326.0 759.6 326.1 756.7 325.8C753.8 325.5 745.0 323.4 740.0 323.3C735.0 323.2 731.4 325.1 726.7 325.0C722.0 324.9 716.8 323.1 711.7 322.5C706.6 321.9 696.3 322.3 696.0 321.7Z" fill="#eab763" stroke="#432f08" stroke-width="1.3" stroke-linejoin="round"/>
<path d="M805.0 327.5C805.0 327.1 813.1 323.6 816.7 323.3C820.3 323.0 823.2 324.3 826.7 325.8C830.2 327.3 835.8 331.2 837.5 332.5C839.2 333.8 838.5 333.9 836.7 333.3C834.9 332.7 830.0 330.2 826.7 329.0C823.4 327.8 820.3 326.1 816.7 325.8C813.1 325.6 805.0 327.9 805.0 327.5Z" fill="#eab763" stroke="#432f08" stroke-width="1.3" stroke-linejoin="round"/>
<path d="M870.0 336.7C871.7 335.9 878.3 334.9 883.0 335.0C887.7 335.1 893.2 336.2 898.0 337.5C902.8 338.8 907.6 341.1 911.7 343.0C915.8 344.9 921.5 347.6 922.5 349.0C923.5 350.4 920.6 351.9 918.0 351.7C915.4 351.4 910.5 349.2 906.7 347.5C902.9 345.8 899.2 342.8 895.0 341.5C890.8 340.2 885.4 340.2 881.7 340.0C878.0 339.8 875.0 340.6 873.0 340.0C871.0 339.4 868.3 337.5 870.0 336.7Z" fill="#eab763" stroke="#432f08" stroke-width="1.3" stroke-linejoin="round"/>
<path d="M1020.6 428.0C1021.2 428.0 1023.0 427.8 1025.0 430.0C1027.0 432.2 1030.5 437.0 1032.5 441.0C1034.5 445.0 1036.5 449.8 1036.9 453.8C1037.3 457.8 1036.2 461.1 1035.0 465.0C1033.8 468.9 1031.5 474.1 1030.0 477.5C1028.5 480.9 1026.3 486.7 1026.3 485.6C1026.3 484.5 1029.2 475.5 1030.0 471.0C1030.8 466.5 1031.3 462.5 1031.3 458.8C1031.3 455.1 1030.8 452.1 1030.0 448.8C1029.2 445.5 1027.8 441.9 1026.3 438.8C1024.8 435.7 1022.2 431.8 1021.3 430.0C1020.3 428.2 1020.0 428.0 1020.6 428.0Z" fill="#eab763" stroke="#432f08" stroke-width="1.3" stroke-linejoin="round"/>
<path d="M1016.0 501.0C1018.6 500.0 1029.6 498.8 1030.6 500.0C1031.6 501.2 1025.1 504.7 1022.0 508.0C1018.9 511.3 1015.7 516.0 1012.0 520.0C1008.3 524.0 1004.3 527.2 1000.0 532.0C995.7 536.8 987.7 547.7 986.0 549.0C984.3 550.3 987.3 544.2 990.0 540.0C992.7 535.8 998.3 528.7 1002.0 524.0C1005.7 519.3 1009.8 515.0 1012.0 512.0C1014.2 509.0 1014.3 507.8 1015.0 506.0C1015.7 504.2 1013.4 502.0 1016.0 501.0Z" fill="#eab763" stroke="#432f08" stroke-width="1.3" stroke-linejoin="round"/>
<path d="M902.5 597.5C903.0 596.8 909.0 594.1 913.0 592.5C917.0 590.9 922.2 589.2 926.7 588.0C931.2 586.8 936.5 586.9 940.0 585.0C943.5 583.1 945.5 578.8 948.0 576.7C950.5 574.6 952.8 573.3 955.0 572.5C957.2 571.7 960.0 571.7 961.0 571.7C962.0 571.7 962.0 571.5 961.0 572.5C960.0 573.5 957.4 575.6 955.0 578.0C952.6 580.4 949.8 584.5 946.7 586.7C943.7 588.9 940.7 590.0 936.7 591.0C932.8 592.0 927.5 591.5 923.0 592.5C918.5 593.5 913.4 595.9 910.0 596.7C906.6 597.5 902.0 598.2 902.5 597.5Z" fill="#eab763" stroke="#432f08" stroke-width="1.3" stroke-linejoin="round"/>
<path d="M790.0 635.0C792.5 633.0 807.2 632.1 813.0 630.0C818.8 627.9 823.8 621.7 825.0 622.5C826.2 623.3 822.0 631.1 820.0 635.0C818.0 638.9 815.2 644.8 813.0 646.0C810.8 647.2 809.2 643.2 806.7 642.5C804.2 641.8 800.8 643.0 798.0 641.7C795.2 640.5 787.5 637.0 790.0 635.0Z" fill="#eab763" stroke="#432f08" stroke-width="1.3" stroke-linejoin="round"/>
<path d="M610.0 632.5C609.4 632.0 618.0 630.5 623.0 630.0C628.0 629.5 635.0 629.3 640.0 629.7C645.0 630.1 648.5 631.7 653.0 632.5C657.5 633.3 661.7 634.2 666.7 634.7C671.7 635.2 680.3 635.5 683.0 635.8C685.7 636.1 684.7 635.9 683.0 636.3C681.3 636.7 676.8 637.7 673.0 638.0C669.2 638.3 665.0 638.7 660.0 638.0C655.0 637.3 648.5 634.8 643.0 634.0C637.5 633.2 632.2 633.2 626.7 633.0C621.2 632.8 610.6 633.0 610.0 632.5Z" fill="#eab763" stroke="#432f08" stroke-width="1.3" stroke-linejoin="round"/>
<path d="M689.0 626.7C688.2 624.8 697.1 621.7 701.7 621.7C706.3 621.7 710.7 626.2 716.7 626.7C722.8 627.2 734.3 624.5 738.0 625.0C741.7 625.5 736.5 628.9 739.0 630.0C741.5 631.1 752.3 630.5 753.0 631.7C753.7 633.0 747.2 636.1 743.0 637.5C738.8 638.9 731.0 637.9 728.0 640.0C725.0 642.1 726.3 649.7 725.0 650.0C723.7 650.3 723.0 644.5 720.0 641.7C717.0 638.9 711.9 635.5 706.7 633.0C701.5 630.5 689.8 628.6 689.0 626.7Z" fill="#eab763" stroke="#432f08" stroke-width="1.3" stroke-linejoin="round"/>
<path d="M416.7 550.0C417.0 549.0 418.6 547.6 420.0 548.0C421.4 548.4 422.5 551.5 425.0 552.5C427.5 553.5 432.2 553.2 435.0 554.0C437.8 554.8 439.5 555.5 441.7 557.5C443.9 559.5 447.0 563.9 448.0 565.8C449.0 567.7 448.3 568.6 447.5 569.0C446.7 569.4 444.6 569.1 443.0 568.0C441.4 566.9 439.9 564.0 438.0 562.5C436.1 561.0 434.2 559.8 431.7 559.0C429.2 558.2 425.3 558.3 423.0 557.5C420.7 556.7 419.1 555.2 418.0 554.0C416.9 552.8 416.4 551.0 416.7 550.0Z" fill="#eab763" stroke="#432f08" stroke-width="1.3" stroke-linejoin="round"/>
<path d="M454.0 585.0C454.6 584.2 461.8 582.6 465.0 583.0C468.2 583.4 470.2 585.5 473.0 587.5C475.8 589.5 478.0 593.1 481.7 595.0C485.4 596.9 489.8 598.0 495.0 599.0C500.2 600.0 511.3 600.2 513.0 601.0C514.7 601.8 508.8 603.8 505.0 604.0C501.2 604.2 494.7 603.7 490.0 602.5C485.3 601.3 480.4 598.8 476.7 596.7C473.0 594.6 470.5 591.5 468.0 590.0C465.5 588.5 464.0 588.3 461.7 587.5C459.4 586.7 453.4 585.8 454.0 585.0Z" fill="#eab763" stroke="#432f08" stroke-width="1.3" stroke-linejoin="round"/>
<path d="M378.0 452.5C377.4 453.1 372.2 462.4 371.7 466.7C371.2 470.9 373.6 474.1 375.0 478.0C376.4 481.9 378.3 485.8 380.0 490.0C381.7 494.2 383.1 499.2 385.0 503.0C386.9 506.8 391.2 512.7 391.7 513.0C392.2 513.3 389.1 508.3 388.0 505.0C386.9 501.7 385.7 496.9 385.0 493.0C384.3 489.1 385.0 485.0 384.0 481.7C383.0 478.4 380.0 475.5 379.0 473.0C378.0 470.5 378.7 468.4 378.0 466.7C377.3 465.0 375.0 465.4 375.0 463.0C375.0 460.6 378.6 451.9 378.0 452.5Z" fill="#eab763" stroke="#432f08" stroke-width="1.3" stroke-linejoin="round"/>
<path d="M388.0 414.0C387.5 415.0 385.8 417.7 385.0 420.0C384.2 422.3 383.3 426.7 383.0 428.0" fill="none" stroke="#432f08" stroke-width="1.1"/>
<path d="M946.7 358.0C947.2 357.6 948.6 356.1 950.0 355.5C951.4 354.9 953.2 354.2 955.0 354.5C956.8 354.8 959.4 356.1 961.0 357.5C962.6 358.9 963.7 360.9 964.5 363.0C965.3 365.1 964.8 368.2 966.0 370.0C967.2 371.8 969.7 372.7 972.0 374.0C974.3 375.3 977.5 376.7 980.0 378.0C982.5 379.3 985.0 380.5 987.0 382.0C989.0 383.5 991.2 386.2 992.0 387.0" fill="none" stroke="#432f08" stroke-width="1.1"/>
<path d="M948.0 362.0C948.9 362.2 952.1 362.1 953.6 363.0C955.1 363.9 954.9 365.8 957.0 367.5C959.1 369.2 962.7 371.5 966.0 373.5C969.3 375.5 973.5 377.5 977.0 379.4C980.5 381.3 984.5 383.7 987.0 385.0C989.5 386.3 991.2 386.7 992.0 387.0" fill="none" stroke="#432f08" stroke-width="1.1"/>
<path d="M618.6 373.6C621.2 373.9 628.7 374.6 634.2 376.5C639.7 378.4 645.4 383.2 651.7 385.3C658.0 387.4 668.6 388.2 672.0 389.2C675.4 390.1 672.8 390.4 672.0 391.0C671.2 391.6 671.2 393.0 667.2 393.0C663.2 393.0 654.3 392.6 647.8 391.0C641.3 389.4 633.2 386.0 628.3 383.3C623.4 380.6 620.2 376.2 618.6 374.6C617.0 373.0 616.0 373.3 618.6 373.6Z" fill="#d9a858" stroke="#432f08" stroke-width="1.4" stroke-linejoin="round"/>
<path d="M714.9 381.4C716.7 380.6 721.2 379.6 725.6 378.5C730.0 377.4 736.5 376.1 741.0 374.6C745.5 373.1 750.3 371.2 752.8 369.7C755.2 368.2 754.6 366.1 755.7 365.8C756.8 365.5 759.0 367.2 759.6 367.8C760.2 368.4 760.1 368.6 759.6 369.7C759.1 370.8 759.1 373.0 756.7 374.6C754.3 376.2 749.5 377.9 745.0 379.4C740.5 380.8 733.9 382.3 729.4 383.3C724.9 384.3 720.2 385.3 717.8 385.3C715.4 385.3 715.4 384.0 714.9 383.3C714.4 382.6 713.1 382.2 714.9 381.4Z" fill="#d9a858" stroke="#432f08" stroke-width="1.4" stroke-linejoin="round"/>
<path d="M589.4 457.2C591.0 455.3 594.3 452.3 599.2 449.4C604.1 446.5 612.8 442.9 618.6 439.7C624.4 436.5 629.3 433.7 634.2 430.0C639.1 426.3 644.2 420.3 647.8 417.4C651.4 414.5 653.5 413.1 655.6 412.5C657.7 411.9 659.6 412.9 660.4 413.5C661.2 414.1 661.5 414.3 660.4 416.4C659.3 418.5 656.7 422.4 653.6 426.0C650.5 429.6 646.2 434.7 642.0 437.8C637.8 440.9 633.2 442.3 628.3 444.6C623.4 446.9 617.3 448.7 612.8 451.4C608.2 454.1 604.2 458.9 601.0 461.0C597.8 463.1 595.2 464.0 593.3 464.0C591.4 464.0 590.0 462.1 589.4 461.0C588.8 459.9 587.8 459.1 589.4 457.2Z" fill="#d9a858" stroke="#432f08" stroke-width="1.4" stroke-linejoin="round"/>
<path d="M594.0 462.0C595.6 460.3 598.7 456.8 603.0 454.0C607.3 451.2 614.5 448.2 620.0 445.0C625.5 441.8 631.0 438.7 636.0 435.0C641.0 431.3 646.2 426.3 650.0 423.0C653.8 419.7 657.3 416.1 659.0 415.0C660.7 413.9 661.3 414.6 660.4 416.4C659.5 418.2 656.7 422.4 653.6 426.0C650.5 429.6 646.2 434.7 642.0 437.8C637.8 440.9 633.2 442.3 628.3 444.6C623.4 446.9 617.3 448.7 612.8 451.4C608.2 454.1 604.2 458.9 601.0 461.0C597.8 463.1 594.5 463.8 593.3 464.0C592.1 464.2 592.4 463.7 594.0 462.0Z" fill="#c49849" stroke="#432f08" stroke-width="0.7" stroke-linejoin="round"/>
<path d="M710.0 416.4C710.6 418.7 711.6 423.1 713.9 428.0C716.2 432.9 720.4 439.8 723.6 445.6C726.8 451.4 729.7 457.2 733.3 463.0C736.9 468.8 741.6 476.1 745.0 480.6C748.4 485.2 751.6 488.9 753.7 490.3C755.8 491.8 757.3 491.6 757.6 489.3C757.9 487.0 757.2 481.7 755.7 476.7C754.2 471.7 751.6 465.0 748.9 459.2C746.1 453.4 742.8 446.9 739.2 441.7C735.6 436.5 730.8 432.2 727.5 428.0C724.2 423.8 722.0 418.9 719.7 416.4C717.4 413.9 715.5 413.2 713.9 412.9C712.3 412.6 710.6 413.8 710.0 414.4C709.4 415.0 709.4 414.1 710.0 416.4Z" fill="#d9a858" stroke="#432f08" stroke-width="1.4" stroke-linejoin="round"/>
<path d="M712.0 417.0C712.0 418.8 713.7 423.2 716.0 428.0C718.3 432.8 722.4 439.8 725.6 445.6C728.8 451.4 731.9 457.3 735.3 463.0C738.7 468.7 742.9 475.4 746.0 480.0C749.1 484.6 752.7 490.6 753.7 490.3C754.7 490.0 753.3 482.9 752.0 478.0C750.7 473.1 748.7 466.8 746.0 461.0C743.3 455.2 739.5 448.5 736.0 443.0C732.5 437.5 728.3 432.3 725.0 428.0C721.7 423.7 718.2 418.8 716.0 417.0C713.8 415.2 712.0 415.2 712.0 417.0Z" fill="#c49849" stroke="#432f08" stroke-width="0.7" stroke-linejoin="round"/>
<path d="M755.7 400.8C757.2 400.1 759.7 398.7 764.4 398.9C769.1 399.1 777.4 400.2 783.9 401.8C790.4 403.4 797.5 406.2 803.3 408.6C809.1 411.0 814.4 414.4 818.9 416.4C823.4 418.3 828.4 419.0 830.5 420.3C832.6 421.6 832.1 423.2 831.5 424.2C830.9 425.1 829.8 426.3 826.7 426.0C823.6 425.7 817.5 424.1 813.0 422.2C808.5 420.3 804.6 417.0 799.4 414.4C794.2 411.8 787.7 408.3 781.9 406.7C776.1 405.1 768.8 405.3 764.4 404.7C760.0 404.1 757.2 403.4 755.7 402.8C754.2 402.2 754.2 401.5 755.7 400.8Z" fill="#d9a858" stroke="#432f08" stroke-width="1.4" stroke-linejoin="round"/>
<path d="M620.0 374.5C622.0 375.3 627.2 377.2 632.0 379.5C636.8 381.8 642.7 386.1 649.0 388.0C655.3 389.9 666.5 390.5 670.0 391.0" fill="none" stroke="#432f08" stroke-width="0.8"/>
<path d="M716.0 383.5C718.2 383.0 724.3 381.7 729.0 380.5C733.7 379.3 739.7 378.1 744.0 376.5C748.3 374.9 752.6 372.4 755.0 371.0C757.4 369.6 757.9 368.5 758.5 368.0" fill="none" stroke="#432f08" stroke-width="0.8"/>
<path d="M757.0 402.0C758.5 402.0 761.7 401.4 766.0 401.8C770.3 402.2 777.2 402.9 783.0 404.5C788.8 406.1 795.5 409.1 801.0 411.5C806.5 413.9 811.2 417.2 816.0 419.0C820.8 420.8 827.7 421.9 830.0 422.5" fill="none" stroke="#432f08" stroke-width="0.8"/></g><rect x="344" y="369.500" width="714.500" height="373.500" fill="none" stroke="#8c8c8c" stroke-width="2.600"/><path d="M676 556.500H726M701.500 531V581" stroke="#9a9384" stroke-width="1" fill="none"/></svg><div class="abs" style="left:680px;top:340px;width:41px;height:20px;background:#fff"></div><span class="t" style="left:684px;top:344px;font-size:11.500px;color:#333">9.924"</span><div class="abs" style="left:1085px;top:541px;width:39px;height:21px;background:#fff"></div><span class="t" style="left:1089px;top:546px;font-size:11px;color:#333">5.198"</span><div class="abs" style="left:103px;top:843px;width:110px;height:31px;border-radius:15px;background:rgba(225,225,225,.55)"></div><svg class="abs" style="left:106px;top:848px" width="104" height="22" viewBox="0 0 104 22"><g fill="none" stroke="#c2c2c2" stroke-width="1.100"><circle cx="11" cy="11" r="9"/><circle cx="92" cy="11" r="9"/><path d="M6.500 11h9M87.500 11h9M92 6.500v9"/></g><text x="51.500" y="17.500" text-anchor="middle" font-size="19" fill="#c2c2c2" font-family="Liberation Sans">100%</text></svg><div class="abs" style="left:0;top:24px"><div id="sidebar" class="abs"><svg class="abs" style="left:18px;top:5px" width="34" height="34" viewBox="0 0 34 34"><circle cx="17" cy="17" r="11.500" fill="none" stroke="#444" stroke-width="1.200"/><path d="M17 12v10M12 17h10" stroke="#444" stroke-width="1.300"/></svg><span class="t" style="top:45px">New</span><svg class="abs" style="left:18px;top:75px" width="34" height="34" viewBox="0 0 34 34"><path d="M11 5.500c1.500 1.800 4 2.500 6 2.500s4.500-.7 6-2.500l7.500 3.800-2.800 5.700-3.200-1.300v12.800H9.500V13.700l-3.200 1.300L3.500 9.300z" fill="none" stroke="#444" stroke-width="1.200" stroke-linejoin="round"/></svg><span class="t" style="top:115px">Templates</span><svg class="abs" style="left:18px;top:145px" width="34" height="34" viewBox="0 0 34 34"><path d="M9 6h17v23H9z" fill="none" stroke="#444" stroke-width="1.200"/><path d="M18 6v9l3-2.500 3 2.500V6" fill="none" stroke="#444" stroke-width="1.200"/><path d="M6 10h5M6 14.500h5M6 19h5M6 23.500h5" stroke="#444" stroke-width="1.200"/></svg><span class="t" style="top:185px">Projects</span><svg class="abs" style="left:18px;top:215px" width="34" height="34" viewBox="0 0 34 34"><rect x="4" y="6" width="27" height="22" rx="1" fill="none" stroke="#444" stroke-width="1.200"/><circle cx="11.500" cy="13.500" r="2.600" fill="none" stroke="#444" stroke-width="1.200"/><path d="M10 28l9-10 4 4 3-3 5 6" fill="none" stroke="#444" stroke-width="1.200" stroke-linejoin="round"/></svg><span class="t" style="top:255px">Images</span><svg class="abs" style="left:18px;top:286px" width="34" height="34" viewBox="0 0 34 34"><path d="M7 5h21v7h-3.500V9H20v16h3.500v3h-12v-3H15V9h-4.500v3H7z" fill="none" stroke="#444" stroke-width="1.200" stroke-linejoin="round"/></svg><span class="t" style="top:325px">Text</span><svg class="abs" style="left:18px;top:358px" width="34" height="34" viewBox="0 0 34 34"><path d="M12.500 17.500A7.500 7.500 0 1 1 22 8.500" fill="none" stroke="#444" stroke-width="1.200"/><path d="M20 9l2.300 5.200 5.700.6-4.200 3.900 1.200 5.600-5-2.900-5 2.900 1.200-5.600-4.200-3.900 5.700-.6z" fill="none" stroke="#444" stroke-width="1.200" stroke-linejoin="round"/></svg><span class="t" style="top:395px">Shapes</span><svg class="abs" style="left:18px;top:427px" width="34" height="34" viewBox="0 0 34 34"><path d="M10 25h15a5.500 5.500 0 0 0 1-10.900 7.500 7.500 0 0 0-14.500-1.500A6.200 6.200 0 0 0 10 25z" fill="none" stroke="#444" stroke-width="1.200" stroke-linejoin="round"/><path d="M17.500 22v-6.500M17.500 13l-4 4h2.500v5h3v-5h2.500z" fill="none" stroke="#444" stroke-width="1.100" stroke-linejoin="round"/></svg><span class="t" style="top:465px">Upload</span></div><div id="toolbar" class="abs"><svg class="abs" style="left:13px;top:15px" width="22" height="20" viewBox="0 0 22 20"><path d="M9 2L2 8l7 6v-3.500c4 0 7 1.500 9.500 6C18.500 10 14.500 6 9 5.500z" fill="none" stroke="#333" stroke-width="1.200" stroke-linejoin="round"/></svg><svg class="abs" style="left:45px;top:15px" width="22" height="20" viewBox="0 0 22 20"><path d="M13 2l7 6-7 6v-3.500c-4 0-7 1.500-9.500 6C3.500 10 7.500 6 13 5.500z" fill="none" stroke="#c4c4c4" stroke-width="1.200" stroke-linejoin="round"/></svg><div class="div" style="left:79px"></div><div class="div" style="left:217px"></div><div class="div" style="left:374px"></div><div class="div" style="left:522px"></div><div class="div" style="left:707px"></div><div class="div" style="left:814px"></div><span class="t lbl" style="left:95px">Operation</span><div class="inp" style="left:95px;width:85px;font-size:10.500px">Basic Cut</div><svg class="abs" style="left:167px;top:29px" width="8" height="6" viewBox="0 0 8 6"><path d="M0.500 0.500h7L4 5.500z" fill="#222"/></svg><div class="abs" style="left:185px;top:23px;width:18px;height:18px;background:#2f95f0;border-radius:1px"></div><span class="t lbl" style="left:233px">Select All</span><svg class="abs" style="left:245px;top:22px" width="20" height="20" viewBox="0 0 20 20"><rect x="1.500" y="1.500" width="17" height="17" fill="none" stroke="#333" stroke-width="1.100" stroke-dasharray="2 1.780"/><path d="M10 5v10M5 10h10" stroke="#333" stroke-width="1.100"/></svg><span class="t lbl" style="left:295px">Edit</span><svg class="abs" style="left:291px;top:22px" width="30" height="20" viewBox="0 0 30 20"><g fill="#fff" stroke="#333" stroke-width="1.100" stroke-linejoin="round"><path d="M1.500 4.800L4.800 1.500 17.500 14.200 14.200 17.500z"/><path d="M4.200 5.500l1.500-1.500M6.400 7.700l1.500-1.500M8.600 9.900l1.500-1.500M10.800 12.100l1.500-1.500M13 14.300l1.500-1.500" fill="none" stroke-width=".9"/><path d="M13.800 1.200l3.600 3.600L6.200 16 1.500 17.600 3 12.800z"/><path d="M3 12.800l3.200 3.200M12 3l3.600 3.600" fill="none"/></g><path d="M21 7.500h7l-3.500 5z" fill="#222"/></svg><span class="t lbl" style="left:331px">Offset</span><svg class="abs" style="left:332px;top:22px" width="30" height="20" viewBox="0 0 30 20"><path d="M9 5.500l4.300 3.100-1.600 5h-5.400l-1.600-5z" fill="none" stroke="#333" stroke-width="1.100" stroke-linejoin="round"/><circle cx="9" cy="10" r="7.500" fill="none" stroke="#333" stroke-width="1.100" stroke-dasharray="2 1.600"/><path d="M19.500 7.500h7l-3.500 5z" fill="#222"/></svg><span class="t lbl dis" style="left:390px">Align</span><svg class="abs" style="left:389px;top:23px" width="30" height="18" viewBox="0 0 30 18"><g stroke="#c9c9c9" stroke-width="1.100" fill="none"><path d="M1.500 1v16" stroke-dasharray="2 1.500"/><path d="M4 5h13M4 9h9M4 13h6"/></g><path d="M20 7h5.500l-2.750 4z" fill="#c9c9c9"/></svg><span class="t lbl dis" style="left:429px">Arrange</span><svg class="abs" style="left:436px;top:23px" width="32" height="18" viewBox="0 0 32 18"><g stroke="#c9c9c9" stroke-width="1.100" fill="#fff"><rect x="1" y="1" width="9.500" height="10" rx="1"/><rect x="5.500" y="6" width="11.500" height="11.500" rx="1"/></g><path d="M21 7h5.500l-2.750 4z" fill="#c9c9c9"/></svg><span class="t lbl dis" style="left:485px">Flip</span><svg class="abs" style="left:480px;top:23px" width="32" height="18" viewBox="0 0 32 18"><g stroke="#c9c9c9" stroke-width="1.100" fill="none"><path d="M8.500 1v16" stroke-dasharray="2 1.500"/><path d="M1 3l5.500 6L1 15z"/><path d="M16 3l-5.500 6 5.500 6z"/></g><path d="M20 7h5.500l-2.750 4z" fill="#c9c9c9"/></svg><span class="t lbl" style="left:537px">Size</span><span class="t sm" style="left:537px">W</span><div class="inp" style="left:551px;width:58px">9.924<span style="position:absolute;left:41px;top:0;width:1px;height:16px;background:#e4e4e4"></span><svg class="spin" style="left:45px" viewBox="0 0 7 12"><path d="M3.5 0.5L6.6 4.8H0.4Z M3.5 11.5L6.6 7.2H0.4Z" fill="#2b2b2b"/></svg></div><svg class="abs" style="left:610px;top:10px" width="26" height="14" viewBox="0 -1 26 14"><path d="M0.500 11.500V8h7M25.500 11.500V8h-7" fill="none" stroke="#ccc" stroke-width="1"/><rect x="9" y="4.800" width="8" height="6.400" rx="2.400" fill="#fff" stroke="#333" stroke-width="1.100"/><path d="M10.600 4.800V3.200a2.400 2.400 0 0 1 4.800 0v1.600" fill="none" stroke="#333" stroke-width="1.100"/><circle cx="13" cy="8" r="1" fill="none" stroke="#333" stroke-width=".8"/></svg><span class="t sm" style="left:623px">H</span><div class="inp" style="left:636px;width:57px">5.198<span style="position:absolute;left:40px;top:0;width:1px;height:16px;background:#e4e4e4"></span><svg class="spin" style="left:44px" viewBox="0 0 7 12"><path d="M3.5 0.5L6.6 4.8H0.4Z M3.5 11.5L6.6 7.2H0.4Z" fill="#2b2b2b"/></svg></div><span class="t lbl" style="left:722px">Rotate</span><svg class="abs" style="left:721px;top:24px" width="17" height="17" viewBox="0 0 17 17"><path d="M8 15.500a6.500 6.500 0 1 1 6.400-7.500" fill="none" stroke="#333" stroke-width="1.200"/><path d="M11.500 7.500l3 3 2.200-3.600" fill="none" stroke="#333" stroke-width="1.200"/></svg><div class="inp" style="left:742px;width:57px">0<span style="position:absolute;left:40px;top:0;width:1px;height:16px;background:#e4e4e4"></span><svg class="spin" style="left:44px" viewBox="0 0 7 12"><path d="M3.5 0.5L6.6 4.8H0.4Z M3.5 11.5L6.6 7.2H0.4Z" fill="#2b2b2b"/></svg></div><span class="t lbl" style="left:828px">Position</span><span class="t sm" style="left:829px">X</span><div class="inp" style="left:841px;width:56px">27.543<span style="position:absolute;left:40px;top:0;width:1px;height:16px;background:#e4e4e4"></span><svg class="spin" style="left:44px" viewBox="0 0 7 12"><path d="M3.5 0.5L6.6 4.8H0.4Z M3.5 11.5L6.6 7.2H0.4Z" fill="#2b2b2b"/></svg></div><span class="t sm" style="left:907px">Y</span><div class="inp" style="left:919px;width:56px">13.574<span style="position:absolute;left:40px;top:0;width:1px;height:16px;background:#e4e4e4"></span><svg class="spin" style="left:44px" viewBox="0 0 7 12"><path d="M3.5 0.5L6.6 4.8H0.4Z M3.5 11.5L6.6 7.2H0.4Z" fill="#2b2b2b"/></svg></div></div><div id="panel" class="abs"><div class="abs" style="left:0;top:0;width:262px;height:74px;background:#dcdcdc"></div><span class="t" style="left:0;width:130px;text-align:center;top:4px;font-size:12.500px;color:#333">Layers</span><span class="t" style="left:130px;width:130px;text-align:center;top:4px;font-size:12.500px;color:#333">Color Sync</span><div class="abs" style="left:0;top:21px;width:130px;height:1px;background:#555"></div><div class="abs" style="left:130px;top:21px;width:132px;height:1px;background:#c4c4c4"></div><span class="t" style="left:-11px;width:80px;text-align:center;top:54px;font-size:10.500px;color:#b3b3b3;">Group</span><span class="t" style="left:53px;width:80px;text-align:center;top:54px;font-size:10.500px;color:#b3b3b3;">UnGroup</span><span class="t" style="left:125px;width:80px;text-align:center;top:54px;font-size:10.500px;color:#222;-webkit-text-stroke:.35px #222">Duplicate</span><span class="t" style="left:190px;width:80px;text-align:center;top:54px;font-size:10.500px;color:#222;-webkit-text-stroke:.35px #222">Delete</span><svg class="abs" style="left:19px;top:28px" width="20" height="17" viewBox="0 0 20 17"><g fill="none" stroke="#a9a9a9" stroke-width="1.100"><rect x="2" y="1.500" width="15.500" height="13.500"/><rect x="4.500" y="4" width="7.500" height="6"/><rect x="7.500" y="6.500" width="7.500" height="6"/></g><g fill="#dcdcdc" stroke="#a9a9a9" stroke-width=".9"><rect x="0.600" y="0.200" width="2.600" height="2.600"/><rect x="16.200" y="0.200" width="2.600" height="2.600"/><rect x="0.600" y="13.700" width="2.600" height="2.600"/><rect x="16.200" y="13.700" width="2.600" height="2.600"/></g></svg><svg class="abs" style="left:84px;top:30px" width="18" height="17" viewBox="0 0 18 17"><g fill="none" stroke="#b4b4b4" stroke-width="1.100"><rect x="1.500" y="1.500" width="9" height="9"/><rect x="6" y="5.500" width="10.500" height="10"/></g><g fill="#dcdcdc" stroke="#b4b4b4" stroke-width=".9"><rect x="0.300" y="0.300" width="2.400" height="2.400"/><rect x="9.300" y="0.300" width="2.400" height="2.400"/><rect x="0.300" y="9.300" width="2.400" height="2.400"/><rect x="4.800" y="4.300" width="2.400" height="2.400"/><rect x="15.300" y="4.300" width="2.400" height="2.400"/><rect x="4.800" y="14.300" width="2.400" height="2.400"/><rect x="15.300" y="14.300" width="2.400" height="2.400"/></g></svg><svg class="abs" style="left:157px;top:29px" width="17" height="18" viewBox="0 0 17 18"><g fill="#dcdcdc" stroke="#222" stroke-width="1.100" stroke-linejoin="round"><rect x="1" y="1" width="11" height="13.500" rx="1"/><rect x="4.500" y="3.500" width="11" height="13.500" rx="1"/></g><path d="M10 6.200l1.300 2.800 3 .3-2.200 2.100.6 3-2.700-1.500-2.700 1.500.6-3-2.200-2.100 3-.3z" fill="none" stroke="#222" stroke-width="1" stroke-linejoin="round"/></svg><svg class="abs" style="left:222px;top:29px" width="17" height="18" viewBox="0 0 17 18"><path d="M1 3.500h15M6 3.500V1.800h5V3.500" fill="none" stroke="#222" stroke-width="1.300"/><path d="M3 5l1 11.500h9L14 5z" fill="none" stroke="#222" stroke-width="1.200" stroke-linejoin="round"/><path d="M6.300 7v7M8.500 7v7M10.700 7v7" stroke="#222" stroke-width="1.300"/></svg><div class="abs" style="left:-1px;top:74px;width:1px;height:723px;background:#cbcbcb"></div><div class="abs" style="left:0;top:73px;width:262px;height:1px;background:#b9b9b9"></div><div class="abs" style="left:48px;top:607px;width:214px;height:85.500px;background:#dcdcdc"></div><div class="abs" style="left:48px;top:109px;width:214px;height:1px;background:#c4c4c4"></div><div class="abs" style="left:48px;top:152px;width:214px;height:1px;background:#c4c4c4"></div><div class="abs" style="left:48px;top:195px;width:214px;height:1px;background:#c4c4c4"></div><div class="abs" style="left:48px;top:238px;width:214px;height:1px;background:#c4c4c4"></div><div class="abs" style="left:48px;top:283px;width:214px;height:1px;background:#c4c4c4"></div><span class="t" style="left:88px;top:81px;font-size:12.500px;color:#222">Basic Cut</span><svg class="abs" style="left:231px;top:82px" width="15" height="10" viewBox="0 0 15 10"><path d="M0.600 5C2.500 1.800 5 0.600 7.500 0.600S12.500 1.800 14.400 5C12.500 8.200 10 9.400 7.500 9.400S2.500 8.200 0.600 5z" fill="#fff" stroke="#1a1a1a" stroke-width="1.100"/><circle cx="7.500" cy="5" r="3.300" fill="#1a1a1a"/><circle cx="6.300" cy="3.900" r="1" fill="#fff"/></svg><span class="t" style="left:88px;top:124px;font-size:12.500px;color:#222">Basic Cut</span><svg class="abs" style="left:231px;top:125px" width="15" height="10" viewBox="0 0 15 10"><path d="M0.600 5C2.500 1.800 5 0.600 7.500 0.600S12.500 1.800 14.400 5C12.500 8.200 10 9.400 7.500 9.400S2.500 8.200 0.600 5z" fill="#fff" stroke="#1a1a1a" stroke-width="1.100"/><circle cx="7.500" cy="5" r="3.300" fill="#1a1a1a"/><circle cx="6.300" cy="3.900" r="1" fill="#fff"/></svg><span class="t" style="left:88px;top:167px;font-size:12.500px;color:#222">Basic Cut</span><svg class="abs" style="left:231px;top:168px" width="15" height="10" viewBox="0 0 15 10"><path d="M0.600 5C2.500 1.800 5 0.600 7.500 0.600S12.500 1.800 14.400 5C12.500 8.200 10 9.400 7.500 9.400S2.500 8.200 0.600 5z" fill="#fff" stroke="#1a1a1a" stroke-width="1.100"/><circle cx="7.500" cy="5" r="3.300" fill="#1a1a1a"/><circle cx="6.300" cy="3.900" r="1" fill="#fff"/></svg><span class="t" style="left:88px;top:210px;font-size:12.500px;color:#222">Basic Cut</span><svg class="abs" style="left:231px;top:211px" width="15" height="10" viewBox="0 0 15 10"><path d="M0.600 5C2.500 1.800 5 0.600 7.500 0.600S12.500 1.800 14.400 5C12.500 8.200 10 9.400 7.500 9.400S2.500 8.200 0.600 5z" fill="#fff" stroke="#1a1a1a" stroke-width="1.100"/><circle cx="7.500" cy="5" r="3.300" fill="#1a1a1a"/><circle cx="6.300" cy="3.900" r="1" fill="#fff"/></svg><span class="t" style="left:88px;top:253px;font-size:12.500px;color:#222">Basic Cut</span><svg class="abs" style="left:231px;top:254px" width="15" height="10" viewBox="0 0 15 10"><path d="M0.600 5C2.500 1.800 5 0.600 7.500 0.600S12.500 1.800 14.400 5C12.500 8.200 10 9.400 7.500 9.400S2.500 8.200 0.600 5z" fill="#fff" stroke="#1a1a1a" stroke-width="1.100"/><circle cx="7.500" cy="5" r="3.300" fill="#1a1a1a"/><circle cx="6.300" cy="3.900" r="1" fill="#fff"/></svg><svg class="abs" style="left:50px;top:297px" width="8" height="5" viewBox="0 0 8 5"><path d="M0 0h8L4 5z" fill="#222"/></svg><span class="t" style="left:68px;top:291px;font-size:16.300px;color:#222">Pie01</span><svg class="abs" style="left:231px;top:296px" width="15" height="10" viewBox="0 0 15 10"><path d="M0.600 5C2.500 1.800 5 0.600 7.500 0.600S12.500 1.800 14.400 5C12.500 8.200 10 9.400 7.500 9.400S2.500 8.200 0.600 5z" fill="#fff" stroke="#1a1a1a" stroke-width="1.100"/><circle cx="7.500" cy="5" r="3.300" fill="#1a1a1a"/><circle cx="6.300" cy="3.900" r="1" fill="#fff"/></svg><div class="abs" style="left:48px;top:314px;width:214px;height:1px;background:#c4c4c4"></div><div class="abs" style="left:48px;top:327px;width:30px;height:14px;border-radius:50%;background:#ebb967"></div><span class="t" style="left:88px;top:329px;font-size:12.500px;color:#222">Basic Cut</span><svg class="abs" style="left:231px;top:330px" width="15" height="10" viewBox="0 0 15 10"><path d="M0.600 5C2.500 1.800 5 0.600 7.500 0.600S12.500 1.800 14.400 5C12.500 8.200 10 9.400 7.500 9.400S2.500 8.200 0.600 5z" fill="#fff" stroke="#1a1a1a" stroke-width="1.100"/><circle cx="7.500" cy="5" r="3.300" fill="#1a1a1a"/><circle cx="6.300" cy="3.900" r="1" fill="#fff"/></svg><div class="abs" style="left:48px;top:357px;width:214px;height:1px;background:#c4c4c4"></div><div class="abs" style="left:48px;top:370px;width:30px;height:14px;border-radius:50%;background:#d4a13a"></div><span class="t" style="left:88px;top:372px;font-size:12.500px;color:#222">Basic Cut</span><svg class="abs" style="left:231px;top:373px" width="15" height="10" viewBox="0 0 15 10"><path d="M0.600 5C2.500 1.800 5 0.600 7.500 0.600S12.500 1.800 14.400 5C12.500 8.200 10 9.400 7.500 9.400S2.500 8.200 0.600 5z" fill="#fff" stroke="#1a1a1a" stroke-width="1.100"/><circle cx="7.500" cy="5" r="3.300" fill="#1a1a1a"/><circle cx="6.300" cy="3.900" r="1" fill="#fff"/></svg><div class="abs" style="left:48px;top:400px;width:214px;height:1px;background:#c4c4c4"></div><div class="abs" style="left:48px;top:413px;width:30px;height:14px;border-radius:50%;background:#ebb967"></div><span class="t" style="left:88px;top:415px;font-size:12.500px;color:#222">Basic Cut</span><svg class="abs" style="left:231px;top:416px" width="15" height="10" viewBox="0 0 15 10"><path d="M0.600 5C2.500 1.800 5 0.600 7.500 0.600S12.500 1.800 14.400 5C12.500 8.200 10 9.400 7.500 9.400S2.500 8.200 0.600 5z" fill="#fff" stroke="#1a1a1a" stroke-width="1.100"/><circle cx="7.500" cy="5" r="3.300" fill="#1a1a1a"/><circle cx="6.300" cy="3.900" r="1" fill="#fff"/></svg><div class="abs" style="left:48px;top:443px;width:214px;height:1px;background:#c4c4c4"></div><div class="abs" style="left:48px;top:456px;width:30px;height:14px;border-radius:50%;background:#d4a13a"></div><span class="t" style="left:88px;top:458px;font-size:12.500px;color:#222">Basic Cut</span><svg class="abs" style="left:231px;top:459px" width="15" height="10" viewBox="0 0 15 10"><path d="M0.600 5C2.500 1.800 5 0.600 7.500 0.600S12.500 1.800 14.400 5C12.500 8.200 10 9.400 7.500 9.400S2.500 8.200 0.600 5z" fill="#fff" stroke="#1a1a1a" stroke-width="1.100"/><circle cx="7.500" cy="5" r="3.300" fill="#1a1a1a"/><circle cx="6.300" cy="3.900" r="1" fill="#fff"/></svg><div class="abs" style="left:48px;top:486px;width:214px;height:1px;background:#c4c4c4"></div><div class="abs" style="left:48px;top:499px;width:30px;height:14px;border-radius:50%;background:#deab5f"></div><span class="t" style="left:88px;top:501px;font-size:12.500px;color:#222">Basic Cut</span><svg class="abs" style="left:231px;top:502px" width="15" height="10" viewBox="0 0 15 10"><path d="M0.600 5C2.500 1.800 5 0.600 7.500 0.600S12.500 1.800 14.400 5C12.500 8.200 10 9.400 7.500 9.400S2.500 8.200 0.600 5z" fill="#fff" stroke="#1a1a1a" stroke-width="1.100"/><circle cx="7.500" cy="5" r="3.300" fill="#1a1a1a"/><circle cx="6.300" cy="3.900" r="1" fill="#fff"/></svg><div class="abs" style="left:48px;top:529px;width:214px;height:1px;background:#c4c4c4"></div><div class="abs" style="left:48px;top:542px;width:30px;height:14px;border-radius:50%;background:#d4a13a"></div><span class="t" style="left:88px;top:544px;font-size:12.500px;color:#222">Basic Cut</span><svg class="abs" style="left:231px;top:545px" width="15" height="10" viewBox="0 0 15 10"><path d="M0.600 5C2.500 1.800 5 0.600 7.500 0.600S12.500 1.800 14.400 5C12.500 8.200 10 9.400 7.500 9.400S2.500 8.200 0.600 5z" fill="#fff" stroke="#1a1a1a" stroke-width="1.100"/><circle cx="7.500" cy="5" r="3.300" fill="#1a1a1a"/><circle cx="6.300" cy="3.900" r="1" fill="#fff"/></svg><div class="abs" style="left:28px;top:576px;width:234px;height:1px;background:#c4c4c4"></div><svg class="abs" style="left:30px;top:590px" width="8" height="5" viewBox="0 0 8 5"><path d="M0 0h8L4 5z" fill="#222"/></svg><span class="t" style="left:48px;top:584px;font-size:16.300px;color:#222">Pie01</span><svg class="abs" style="left:231px;top:589px" width="15" height="10" viewBox="0 0 15 10"><path d="M0.600 5C2.500 1.800 5 0.600 7.500 0.600S12.500 1.800 14.400 5C12.500 8.200 10 9.400 7.500 9.400S2.500 8.200 0.600 5z" fill="#fff" stroke="#1a1a1a" stroke-width="1.100"/><circle cx="7.500" cy="5" r="3.300" fill="#1a1a1a"/><circle cx="6.300" cy="3.900" r="1" fill="#fff"/></svg><div class="abs" style="left:48px;top:607px;width:214px;height:1px;background:#b8b8b8"></div><div class="abs" style="left:48px;top:650px;width:214px;height:1px;background:#b4b4b4"></div><div class="abs" style="left:48px;top:621px;width:30px;height:14px;border-radius:3px 3px 15px 15px/3px 3px 11px 11px;background:#d3d3d1"></div><span class="t" style="left:88px;top:623px;font-size:12.500px;color:#222">Basic Cut</span><svg class="abs" style="left:231px;top:624px" width="15" height="10" viewBox="0 0 15 10"><path d="M0.600 5C2.500 1.800 5 0.600 7.500 0.600S12.500 1.800 14.400 5C12.500 8.200 10 9.400 7.500 9.400S2.500 8.200 0.600 5z" fill="#fff" stroke="#1a1a1a" stroke-width="1.100"/><circle cx="7.500" cy="5" r="3.300" fill="#1a1a1a"/><circle cx="6.300" cy="3.900" r="1" fill="#fff"/></svg><div class="abs" style="left:48px;top:663px;width:30px;height:14px;border-radius:3px 3px 15px 15px/3px 3px 11px 11px;background:#e2e2e0"></div><span class="t" style="left:88px;top:665px;font-size:12.500px;color:#222">Basic Cut</span><svg class="abs" style="left:231px;top:666px" width="15" height="10" viewBox="0 0 15 10"><path d="M0.600 5C2.500 1.800 5 0.600 7.500 0.600S12.500 1.800 14.400 5C12.500 8.200 10 9.400 7.500 9.400S2.500 8.200 0.600 5z" fill="#fff" stroke="#1a1a1a" stroke-width="1.100"/><circle cx="7.500" cy="5" r="3.300" fill="#1a1a1a"/><circle cx="6.300" cy="3.900" r="1" fill="#fff"/></svg><svg class="abs" style="left:48px;top:78px" width="30" height="270" viewBox="1226 181 30 270"><g fill="#dca94f" stroke="#4a3a14" stroke-width=".7" stroke-linejoin="round"><path d="M1229 194.500c5-1 10-1.500 14-4 3-2 6-4.500 9.500-5.500-1 3-3 6-6 7.500-5 2.500-12 2-17.500 2z"/><path d="M1230 234c4-2 9-2.500 13-4.500 2.500-1.500 5-3 8.500-4-1 4-3 8-5 11-1.500 2.500-4 3.500-7 3-3.500-.5-7-3-9.500-5.500z"/><path d="M1229 272c4-.5 7 .5 10 1.500 4.500 1 9-.5 13.500 1-3 2-7 2.500-9.500 3.500-1.500 1-1.500 3.500-2 5-1-2-1.500-4-3.500-5-2.500-1.500-6-2.500-8.500-6z"/><path d="M1238 307c-1.500 3-1.800 6-.8 9 1.500 4 3.500 8 4.300 14.500-2-3-3.500-6.500-4.500-10-1.200-4-2-9 1-13.500z"/><path d="M1230 356c3 0 6 1.500 8.500 3 3.500 2 7 3 9.500 6 .8 1 1.500 2.500 1 3.500-3-.5-5.500-2-8-3.500-3-2-6-3-8.500-5.500-1.200-1.200-2-2.500-2.500-3.500z"/></g></svg><div class="abs" style="left:0;top:696px;width:262px;height:49px;background:#f6f6f6;border-top:1px solid #e9e9e9"></div><div class="abs" style="left:10px;top:703px;width:53px;height:36px;background:#fff;border:1px solid #555;border-radius:2px"></div><span class="t" style="left:73px;top:716px;font-size:10px;color:#222">Blank Canvas</span><div class="abs" style="left:0;top:745px;width:262px;height:52px;background:#dcdcdc"></div><span class="t" style="left:-18px;width:80px;text-align:center;top:776px;font-size:10.600px;color:#222;-webkit-text-stroke:.35px #222">Slice</span><span class="t" style="left:28px;width:80px;text-align:center;top:776px;font-size:10.600px;color:#222;-webkit-text-stroke:.35px #222">Weld</span><span class="t" style="left:77px;width:80px;text-align:center;top:776px;font-size:10.600px;color:#222;-webkit-text-stroke:.35px #222">Attach</span><span class="t" style="left:131px;width:80px;text-align:center;top:776px;font-size:10.600px;color:#222;-webkit-text-stroke:.35px #222">Flatten</span><span class="t" style="left:189px;width:80px;text-align:center;top:776px;font-size:10.600px;color:#b3b3b3;">Contour</span><svg class="abs" style="left:13px;top:752px" width="19" height="18" viewBox="0 0 19 18"><g fill="none" stroke="#222" stroke-width="1.200" stroke-linejoin="round"><path d="M6.500 9.500H1V1h10.500v3.500"/><circle cx="11.500" cy="10.500" r="5.800"/><path d="M7 6.800l2.500-2.600M6 10l5.500-5.700"/></g><path d="M11.500 7.500v3.500h3.300a3.400 3.400 0 0 1-6.600 0 3.400 3.400 0 0 1 3.300-3.500z" fill="#555" stroke="#222" stroke-width="1"/></svg><svg class="abs" style="left:59px;top:752px" width="18" height="18" viewBox="0 0 18 18"><path d="M1 1h10.500v4.300a5.600 5.600 0 1 1-5 8.200V10.500H1z" fill="none" stroke="#222" stroke-width="1.200" stroke-linejoin="round"/></svg><svg class="abs" style="left:109px;top:752px" width="18" height="18" viewBox="0 0 18 18"><path d="M13.500 12L6 3.200a2.300 2.300 0 0 0-3.500 3l8.300 9.600a3.200 3.200 0 0 0 4.900-4.200L7.500 2.100" fill="none" stroke="#222" stroke-width="1.300" stroke-linecap="round" transform="translate(.5 0)"/></svg><svg class="abs" style="left:162px;top:752px" width="19" height="18" viewBox="0 0 19 18"><g fill="none" stroke="#222" stroke-width="1.200" stroke-linejoin="round"><path d="M9.500 0.500v7M6.800 5.200l2.700 2.600 2.700-2.600"/><path d="M6 7.200L1.500 9.500l8 4 8-4L13 7.200"/><path d="M1.500 12.500l8 4 8-4"/></g></svg><svg class="abs" style="left:220px;top:753px" width="18" height="17" viewBox="0 0 18 17"><rect x="0.600" y="0.600" width="16.800" height="15.800" rx="1.500" fill="#e2e2e2" stroke="#c6c6c6" stroke-width="1"/><rect x="3.500" y="3.500" width="11" height="10" fill="none" stroke="#c0c0c0" stroke-width="1" stroke-dasharray="2.500 2"/></svg><div class="abs" style="left:258px;top:0;width:2px;height:797px;background:#f0f0f0"></div></div></div><div class="abs" style="left:256px;top:161px;width:210px;height:252px;background:#fff;border-radius:4px;box-shadow:0 2px 8px rgba(0,0,0,.28),0 0 2px rgba(0,0,0,.15)"></div><span class="t" style="left:276px;top:185px;font-size:14.700px;color:#333">Material colors</span><div class="abs" style="left:276px;top:210px;width:18px;height:18px;border-radius:2px;background:#2f95f0"></div><div class="abs" style="left:301px;top:210px;width:18px;height:18px;border-radius:2px;background:#d4a13a"></div><div class="abs" style="left:327px;top:210px;width:18px;height:18px;border-radius:2px;background:#dba85a"></div><div class="abs" style="left:352px;top:210px;width:18px;height:18px;border-radius:2px;background:#e6b15f"></div><div class="abs" style="left:377px;top:210px;width:18px;height:18px;border-radius:2px;background:#eab868"></div><div class="abs" style="left:403px;top:210px;width:18px;height:18px;border-radius:2px;background:#deab5b"></div><div class="abs" style="left:428px;top:210px;width:18px;height:18px;border-radius:2px;background:#d7aa61"></div><svg class="abs" style="left:279px;top:214px" width="12" height="10" viewBox="0 0 12 10"><path d="M1.500 5l3 3 6-6.500" fill="none" stroke="#16233a" stroke-width="2"/></svg><div class="abs" style="left:276px;top:233px;width:18px;height:18px;border-radius:2px;background:#c49a50"></div><div class="abs" style="left:276px;top:266px;width:18px;height:18px;border-radius:2px;background:#ef9a9a"></div><div class="abs" style="left:301px;top:266px;width:18px;height:18px;border-radius:2px;background:#ce93d8"></div><div class="abs" style="left:327px;top:266px;width:18px;height:18px;border-radius:2px;background:#9fa8da"></div><div class="abs" style="left:352px;top:266px;width:18px;height:18px;border-radius:2px;background:#90caf9"></div><div class="abs" style="left:377px;top:266px;width:18px;height:18px;border-radius:2px;background:#a5d6a7"></div><div class="abs" style="left:403px;top:266px;width:18px;height:18px;border-radius:2px;background:#fff59d"></div><div class="abs" style="left:428px;top:266px;width:18px;height:18px;border-radius:2px;background:#f8cb83"></div><div class="abs" style="left:276px;top:289px;width:18px;height:18px;border-radius:2px;background:#e53935"></div><div class="abs" style="left:301px;top:289px;width:18px;height:18px;border-radius:2px;background:#9c3eb5"></div><div class="abs" style="left:327px;top:289px;width:18px;height:18px;border-radius:2px;background:#3f51b5"></div><div class="abs" style="left:352px;top:289px;width:18px;height:18px;border-radius:2px;background:#2f95f0"></div><div class="abs" style="left:377px;top:289px;width:18px;height:18px;border-radius:2px;background:#52ae50"></div><div class="abs" style="left:403px;top:289px;width:18px;height:18px;border-radius:2px;background:#ffeb3b"></div><div class="abs" style="left:428px;top:289px;width:18px;height:18px;border-radius:2px;background:#f19633"></div><div class="abs" style="left:276px;top:312px;width:18px;height:18px;border-radius:2px;background:#b92d27"></div><div class="abs" style="left:301px;top:312px;width:18px;height:18px;border-radius:2px;background:#4a2a94"></div><div class="abs" style="left:327px;top:312px;width:18px;height:18px;border-radius:2px;background:#1c2585"></div><div class="abs" style="left:352px;top:312px;width:18px;height:18px;border-radius:2px;background:#0d47a1"></div><div class="abs" style="left:377px;top:312px;width:18px;height:18px;border-radius:2px;background:#2a6a24"></div><div class="abs" style="left:403px;top:312px;width:18px;height:18px;border-radius:2px;background:#f8c032"></div><div class="abs" style="left:428px;top:312px;width:18px;height:18px;border-radius:2px;background:#e8502f"></div><div class="abs" style="left:276px;top:335px;width:18px;height:18px;border-radius:2px;background:#ffffff;box-shadow:inset 0 0 0 1px #eee"></div><div class="abs" style="left:301px;top:335px;width:18px;height:18px;border-radius:2px;background:#c8c8c8"></div><div class="abs" style="left:327px;top:335px;width:18px;height:18px;border-radius:2px;background:#969696"></div><div class="abs" style="left:352px;top:335px;width:18px;height:18px;border-radius:2px;background:#686868"></div><div class="abs" style="left:377px;top:335px;width:18px;height:18px;border-radius:2px;background:#363636"></div><div class="abs" style="left:403px;top:335px;width:18px;height:18px;border-radius:2px;background:#000000"></div><div class="abs" style="left:428px;top:335px;width:18px;height:18px;border-radius:2px;background:#92571b"></div><span class="t" style="left:276px;top:370px;font-size:14px;font-weight:bold;color:#333">Advanced</span><svg class="abs" style="left:432px;top:371px" width="13" height="13" viewBox="0 0 13 13"><path d="M6.500 0.500v12M0.500 6.500h12" stroke="#333" stroke-width="1.200"/></svg></div></div></body></html>
